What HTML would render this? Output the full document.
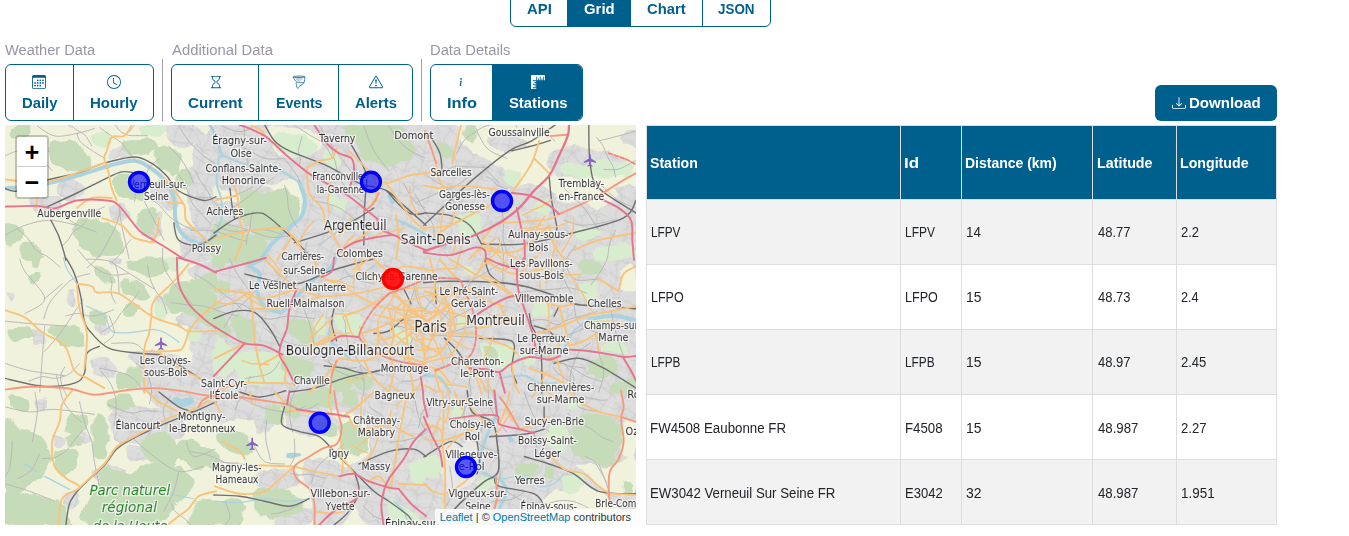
<!DOCTYPE html>
<html lang="en">
<head>
<meta charset="utf-8">
<title>Weather Stations</title>
<style>
*{box-sizing:border-box}
html,body{margin:0;padding:0;background:#fff}
body{width:1349px;height:536px;overflow:hidden;position:relative;font-family:"Liberation Sans","DejaVu Sans",sans-serif;color:#212529}
.abs{position:absolute}
.grp{position:absolute;border:1px solid #00608d;border-radius:6px;background:#fff;overflow:hidden}
.grp i{position:absolute;top:0;bottom:0;width:1px;background:#00608d}
.grp b{position:absolute;top:0;bottom:0;background:#00608d}
.sep{position:absolute;width:1px;background:#a59fb3}
.tx{position:absolute;white-space:nowrap;font-size:14px;line-height:20px;height:20px;transform-origin:0 50%}
.ic{position:absolute;width:14px;height:14px;fill:#00608d}
#dl{left:1155px;top:85px;width:122px;height:36px;background:#00608d;border-radius:6px}
#map{left:5px;top:125px;width:631px;height:400px;background:#e8e6df;overflow:hidden}
#tbl{left:646px;top:125px;width:631px;height:400px;background:#ddd}
#tbl div{position:absolute}
#tbl .h{background:#00608d;top:1px;height:73px}
#tbl .r{left:1px;right:1px;height:64px}
#tbl .v{top:0;bottom:0;width:1px;background:#ddd}
#tbl .hl{left:0;right:0;height:1px;background:#ddd}
#zc{position:absolute;left:10px;top:10px;width:34px;height:64px;border:2px solid rgba(0,0,0,0.2);border-radius:4px;background-clip:padding-box}
#zc .zb{position:relative;width:30px;height:30px;background:#fff;text-align:center;font:bold 25px/30px "Liberation Mono","DejaVu Sans Mono",monospace;color:#000}
#zc .zb span{position:absolute;left:0;right:0;top:3px}
#zc .zb:first-child{border-radius:2px 2px 0 0}
#zc .zb:last-child{border-radius:0 0 2px 2px}
#attr{position:absolute;right:0;bottom:0;height:16px;padding:0 5px;background:rgba(255,255,255,0.8);font:11px/16px "Liberation Sans","DejaVu Sans",sans-serif;color:#333;white-space:nowrap}
#attr .lk{color:#0078a8}
</style>
</head>
<body>
<div class="grp" style="left:510px;top:-12px;width:261px;height:39px"><b style="left:56px;width:64px"></b><i style="left:56px"></i><i style="left:119px"></i><i style="left:191px"></i></div>
<div class="sep" style="left:162px;top:59px;height:62px"></div>
<div class="sep" style="left:421px;top:59px;height:62px"></div>
<div class="grp" style="left:5px;top:64px;width:149px;height:57px"><i style="left:67px"></i></div>
<div class="grp" style="left:171px;top:64px;width:242px;height:57px"><i style="left:86px"></i><i style="left:166px"></i></div>
<div class="grp" style="left:430px;top:64px;width:153px;height:57px"><b style="left:61px;right:0"></b></div>
<div class="abs" id="dl"></div>
<svg class="ic" style="left:32.3px;top:75.0px;fill:#00608d;width:14px;height:14px" viewBox="0 0 16 16"><path d="M14 0H2a2 2 0 0 0-2 2v12a2 2 0 0 0 2 2h12a2 2 0 0 0 2-2V2a2 2 0 0 0-2-2M1 3.857C1 3.384 1.448 3 2 3h12c.552 0 1 .384 1 .857v10.286c0 .473-.448.857-1 .857H2c-.552 0-1-.384-1-.857z"/><path d="M6.500 7a1 1 0 1 0 0-2 1 1 0 0 0 0 2m3 0a1 1 0 1 0 0-2 1 1 0 0 0 0 2m3 0a1 1 0 1 0 0-2 1 1 0 0 0 0 2m-9 3a1 1 0 1 0 0-2 1 1 0 0 0 0 2m3 0a1 1 0 1 0 0-2 1 1 0 0 0 0 2m3 0a1 1 0 1 0 0-2 1 1 0 0 0 0 2m3 0a1 1 0 1 0 0-2 1 1 0 0 0 0 2m-9 3a1 1 0 1 0 0-2 1 1 0 0 0 0 2m3 0a1 1 0 1 0 0-2 1 1 0 0 0 0 2m3 0a1 1 0 1 0 0-2 1 1 0 0 0 0 2"/></svg>
<svg class="ic" style="left:106.6px;top:75.0px;fill:#00608d;width:14px;height:14px" viewBox="0 0 16 16"><path d="M8 3.500a.5.5 0 0 0-1 0V9a.5.5 0 0 0 .252.434l3.500 2a.5.5 0 0 0 .496-.868L8 8.710z"/><path d="M8 16A8 8 0 1 0 8 0a8 8 0 0 0 0 16m7-8A7 7 0 1 1 1 8a7 7 0 0 1 14 0"/></svg>
<svg class="ic" style="left:208.5px;top:75.0px;fill:#00608d;width:14px;height:14px" viewBox="0 0 16 16"><path d="M2 1.500a.5.5 0 0 1 .5-.5h11a.5.5 0 0 1 0 1h-1v1a4.500 4.500 0 0 1-2.557 4.060c-.29.139-.443.377-.443.590v.7c0 .213.154.451.443.590A4.500 4.500 0 0 1 12.500 13v1h1a.5.5 0 0 1 0 1h-11a.5.5 0 1 1 0-1h1v-1a4.500 4.500 0 0 1 2.557-4.060c.29-.139.443-.377.443-.590v-.7c0-.213-.154-.451-.443-.590A4.500 4.500 0 0 1 3.500 3V2h-1a.5.5 0 0 1-.5-.5m2.500.5v1a3.500 3.500 0 0 0 1.989 3.158c.533.256 1.011.791 1.011 1.491v.702c0 .7-.478 1.235-1.011 1.491A3.500 3.500 0 0 0 4.500 13v1h7v-1a3.500 3.500 0 0 0-1.989-3.158C8.978 9.586 8.500 9.052 8.500 8.351v-.702c0-.7.478-1.235 1.011-1.491A3.500 3.500 0 0 0 11.500 3V2z"/></svg>
<svg class="ic" style="left:291.7px;top:75.0px;fill:#00608d;width:14px;height:14px" viewBox="0 0 16 16"><path fill="#c9d3da" stroke="none" d="M3 3h10L9 8 6 7z"/><path fill="none" stroke="#00608d" stroke-width="0.85" stroke-linejoin="round" d="M1.2 2C1.2 1 14.8 1 14.8 2S1.2 3.3 1.2 2zM1.2 2.2C2.2 4.8 3.8 6.6 5.3 7.8 4.6 9 4.6 10.2 5.1 11.3 4.9 13 5.6 14.4 6.8 15.4 7.2 13.8 8.6 12.6 10.2 11.8 12 10.8 13.3 9.7 13.9 8.2 14.4 6 14.7 4 14.8 2.2M6 8.2C8.5 8.9 11 9 13.5 8.4"/></svg>
<svg class="ic" style="left:368.5px;top:75.0px;fill:#00608d;width:14px;height:14px" viewBox="0 0 16 16"><path d="M7.938 2.016A.13.13 0 0 1 8.002 2a.13.13 0 0 1 .063.016.15.15 0 0 1 .054.057l6.857 11.667c.036.060.035.124.002.183a.2.2 0 0 1-.054.060.1.1 0 0 1-.066.017H1.146a.1.1 0 0 1-.066-.017.2.2 0 0 1-.054-.060.18.18 0 0 1 .002-.183L7.884 2.073a.15.15 0 0 1 .054-.057m1.044-.450a1.130 1.130 0 0 0-1.960 0L.165 13.233c-.457.778.091 1.767.980 1.767h13.713c.889 0 1.438-.990.980-1.767z"/><path d="M7.002 12a1 1 0 1 1 2 0 1 1 0 0 1-2 0M7.100 5.995a.905.905 0 1 1 1.800 0l-.350 3.507a.552.552 0 0 1-1.100 0z"/></svg>
<svg class="ic" style="left:454.3px;top:75.0px;fill:#00608d;width:14px;height:14px" viewBox="0 0 16 16"><path d="m8.930 6.588-2.290.287-.082.380.450.083c.294.070.352.176.288.469l-.738 3.468c-.194.897.105 1.319.808 1.319.545 0 1.178-.252 1.465-.598l.088-.416c-.2.176-.492.246-.686.246-.275 0-.375-.193-.304-.533zM9 4.500a1 1 0 1 1-2 0 1 1 0 0 1 2 0"/></svg>
<svg class="ic" style="left:531.0px;top:75.0px;fill:#fff;width:14px;height:14px" viewBox="0 0 16 16"><path d="M1 0a1 1 0 0 0-1 1v14a1 1 0 0 0 1 1h5v-1H2v-1h4v-1H4v-1h2v-1H2v-1h4V9H4V8h2V7H2V6h4V2h1v4h1V4h1v2h1V2h1v4h1V4h1v2h1V2h1v4h1V1a1 1 0 0 0-1-1z"/></svg>
<svg class="ic" style="left:1171.5px;top:96.0px;fill:#fff;width:14px;height:14px" viewBox="0 0 16 16"><path d="M.5 9.900a.5.5 0 0 1 .5.5v2.500a1 1 0 0 0 1 1h12a1 1 0 0 0 1-1v-2.500a.5.5 0 0 1 1 0v2.500a2 2 0 0 1-2 2H2a2 2 0 0 1-2-2v-2.500a.5.5 0 0 1 .5-.5"/><path d="M7.646 11.854a.5.5 0 0 0 .708 0l3-3a.5.5 0 0 0-.708-.708L8.500 10.293V1.500a.5.5 0 0 0-1 0v8.793L5.354 8.146a.5.5 0 1 0-.708.708z"/></svg>
<div class="abs" id="tbl">
<div class="h" style="left:1px;right:1px"></div>
<div class="r" style="top:75px;background:#f2f2f2"></div>
<div class="r" style="top:140px;background:#fff"></div>
<div class="r" style="top:205px;background:#f2f2f2"></div>
<div class="r" style="top:270px;background:#fff"></div>
<div class="r" style="top:335px;background:#f2f2f2"></div>
<div class="v" style="left:254px"></div><div class="v" style="left:315px"></div><div class="v" style="left:446px"></div><div class="v" style="left:530px"></div>
</div>
<span class="tx" style="left:527.4px;top:-1px;font-weight:700;color:#00608d;transform:scaleX(1.0608)">API</span>
<span class="tx" style="left:584.4px;top:-1px;font-weight:700;color:#fff;transform:scaleX(1.0651)">Grid</span>
<span class="tx" style="left:647.1px;top:-1px;font-weight:700;color:#00608d;transform:scaleX(1.0572)">Chart</span>
<span class="tx" style="left:717.9px;top:-1px;font-weight:700;color:#00608d;transform:scaleX(0.9583)">JSON</span>
<span class="tx" style="left:5.4px;top:40px;font-weight:400;color:#9a94a6;transform:scaleX(1.0480)">Weather Data</span>
<span class="tx" style="left:171.6px;top:40px;font-weight:400;color:#9a94a6;transform:scaleX(1.0628)">Additional Data</span>
<span class="tx" style="left:430.1px;top:40px;font-weight:400;color:#9a94a6;transform:scaleX(1.0538)">Data Details</span>
<span class="tx" style="left:21.5px;top:93px;font-weight:700;color:#00608d;transform:scaleX(1.0588)">Daily</span>
<span class="tx" style="left:89.9px;top:93px;font-weight:700;color:#00608d;transform:scaleX(1.0737)">Hourly</span>
<span class="tx" style="left:188.2px;top:93px;font-weight:700;color:#00608d;transform:scaleX(1.0792)">Current</span>
<span class="tx" style="left:275.5px;top:93px;font-weight:700;color:#00608d;transform:scaleX(1.0129)">Events</span>
<span class="tx" style="left:354.8px;top:93px;font-weight:700;color:#00608d;transform:scaleX(1.0580)">Alerts</span>
<span class="tx" style="left:446.8px;top:93px;font-weight:700;color:#00608d;transform:scaleX(1.1755)">Info</span>
<span class="tx" style="left:509.0px;top:93px;font-weight:700;color:#fff;transform:scaleX(1.0575)">Stations</span>
<span class="tx" style="left:1189.4px;top:93px;font-weight:700;color:#fff;transform:scaleX(1.0731)">Download</span>
<span class="tx" style="left:650.0px;top:153px;font-weight:700;color:#fff;transform:scaleX(1.0089)">Station</span>
<span class="tx" style="left:904.1px;top:153px;font-weight:700;color:#fff;transform:scaleX(1.2102)">Id</span>
<span class="tx" style="left:965.4px;top:153px;font-weight:700;color:#fff;transform:scaleX(0.9985)">Distance (km)</span>
<span class="tx" style="left:1096.5px;top:153px;font-weight:700;color:#fff;transform:scaleX(1.0200)">Latitude</span>
<span class="tx" style="left:1180.1px;top:153px;font-weight:700;color:#fff;transform:scaleX(1.0130)">Longitude</span>
<span class="tx" style="left:650.6px;top:222px;font-weight:400;color:#212529;transform:scaleX(0.8400)">LFPV</span>
<span class="tx" style="left:650.5px;top:287px;font-weight:400;color:#212529;transform:scaleX(0.8933)">LFPO</span>
<span class="tx" style="left:650.6px;top:352px;font-weight:400;color:#212529;transform:scaleX(0.8418)">LFPB</span>
<span class="tx" style="left:650.4px;top:418px;font-weight:400;color:#212529;transform:scaleX(0.9501)">FW4508 Eaubonne FR</span>
<span class="tx" style="left:650.4px;top:483px;font-weight:400;color:#212529;transform:scaleX(0.9452)">EW3042 Verneuil Sur Seine FR</span>
<span class="tx" style="left:904.9px;top:222px;font-weight:400;color:#212529;transform:scaleX(0.8549)">LFPV</span>
<span class="tx" style="left:904.9px;top:287px;font-weight:400;color:#212529;transform:scaleX(0.8990)">LFPO</span>
<span class="tx" style="left:904.9px;top:352px;font-weight:400;color:#212529;transform:scaleX(0.8478)">LFPB</span>
<span class="tx" style="left:904.7px;top:418px;font-weight:400;color:#212529;transform:scaleX(0.9447)">F4508</span>
<span class="tx" style="left:904.7px;top:483px;font-weight:400;color:#212529;transform:scaleX(0.9302)">E3042</span>
<span class="tx" style="left:966.0px;top:222px;font-weight:400;color:#212529;transform:scaleX(0.9594)">14</span>
<span class="tx" style="left:965.9px;top:287px;font-weight:400;color:#212529;transform:scaleX(0.9887)">15</span>
<span class="tx" style="left:965.9px;top:352px;font-weight:400;color:#212529;transform:scaleX(0.9887)">15</span>
<span class="tx" style="left:965.9px;top:418px;font-weight:400;color:#212529;transform:scaleX(0.9887)">15</span>
<span class="tx" style="left:966.4px;top:483px;font-weight:400;color:#212529;transform:scaleX(0.9988)">32</span>
<span class="tx" style="left:1097.8px;top:222px;font-weight:400;color:#212529;transform:scaleX(0.9283)">48.77</span>
<span class="tx" style="left:1097.8px;top:287px;font-weight:400;color:#212529;transform:scaleX(0.9275)">48.73</span>
<span class="tx" style="left:1097.8px;top:352px;font-weight:400;color:#212529;transform:scaleX(0.9283)">48.97</span>
<span class="tx" style="left:1097.8px;top:418px;font-weight:400;color:#212529;transform:scaleX(0.9429)">48.987</span>
<span class="tx" style="left:1097.8px;top:483px;font-weight:400;color:#212529;transform:scaleX(0.9429)">48.987</span>
<span class="tx" style="left:1181.1px;top:222px;font-weight:400;color:#212529;transform:scaleX(0.9269)">2.2</span>
<span class="tx" style="left:1181.2px;top:287px;font-weight:400;color:#212529;transform:scaleX(0.9061)">2.4</span>
<span class="tx" style="left:1181.1px;top:352px;font-weight:400;color:#212529;transform:scaleX(0.9309)">2.45</span>
<span class="tx" style="left:1181.1px;top:418px;font-weight:400;color:#212529;transform:scaleX(0.9333)">2.27</span>
<span class="tx" style="left:1180.7px;top:483px;font-weight:400;color:#212529;transform:scaleX(0.9589)">1.951</span>
<div class="abs" id="map"><svg id="mapsvg" width="631" height="400" viewBox="5 125 631 400" style="position:absolute;left:0;top:0">
<defs><pattern id="ug" width="46" height="38" patternUnits="userSpaceOnUse" patternTransform="rotate(17)"><rect width="46" height="38" fill="#dddcdc"/><path fill="none" stroke="#c9c8c8" stroke-width="0.8" d="M0 6H46M0 19H46M0 30H46M8 0V38M23 0V38M37 0V38M0 0L46 38M46 12L20 38"/><path fill="none" stroke="#e8e8e8" stroke-width="0.6" d="M0 12H46M15 0V38"/></pattern><filter id="halo" x="-2%" y="-2%" width="104%" height="104%"><feMorphology in="SourceAlpha" operator="dilate" radius="1.1" result="d"/><feGaussianBlur in="d" stdDeviation="0.45" result="b"/><feFlood flood-color="#fff" flood-opacity="0.78"/><feComposite in2="b" operator="in" result="h"/><feMerge><feMergeNode in="h"/><feMergeNode in="SourceGraphic"/></feMerge></filter><filter id="rough" x="-5%" y="-5%" width="110%" height="110%"><feTurbulence type="fractalNoise" baseFrequency="0.045" numOctaves="3" seed="7"/><feDisplacementMap in="SourceGraphic" scale="14" xChannelSelector="R" yChannelSelector="G"/></filter></defs>
<rect x="5" y="125" width="631" height="400" fill="#f1f2dc"/>
<g filter="url(#rough)">
<path fill="url(#ug)" d="M57.1 181.9C60 178.7 72 178.3 77 179.4C82 180.4 86.9 184.7 86.9 188.1C86.9 191.4 81.5 197.6 77 199.2C72.4 200.9 62.9 200.9 59.6 198C56.3 195.1 54.2 185 57.1 181.9ZM153.9 183.1C157.7 181.2 169.7 181.9 173.8 184.3C177.9 186.8 178.8 193.6 178.8 198C178.8 202.3 177.1 208.7 173.8 210.4C170.5 212.1 162.6 210.4 158.9 207.9C155.2 205.4 152.3 199.6 151.5 195.5C150.6 191.4 150.2 185 153.9 183.1ZM109.3 149.6C112.2 147.9 125.4 148.1 129.1 149.6C132.8 151 134.5 156.6 131.6 158.3C128.7 159.9 115.5 161 111.7 159.5C108 158.1 106.4 151.2 109.3 149.6ZM196.1 168.2C200.5 165.7 211.9 155.4 215 165.7C218.1 176.1 217.3 220.3 215 230.3C212.7 240.2 204.7 230.3 201.1 225.3C197.5 220.3 195.7 207.9 193.7 200.5C191.6 193 188.3 186 188.7 180.6C189.1 175.2 191.7 170.7 196.1 168.2ZM139 220.3C142.1 217.4 154.8 213.7 158.9 215.4C163 217 165.5 226.5 163.9 230.3C162.2 234 152.9 237.3 149 237.7C145 238.1 141.9 235.6 140.3 232.7C138.6 229.8 135.9 223.2 139 220.3ZM109.3 207.9C110.9 205.4 120.8 203.8 124.1 205.4C127.5 207.1 130.8 215.4 129.1 217.8C127.5 220.3 117.5 222 114.2 220.3C110.9 218.7 107.6 210.4 109.3 207.9ZM29.8 198C34 195.9 49.7 193.8 54.6 195.5C59.6 197.2 61.7 205 59.6 207.9C57.5 210.8 47.2 212.9 42.2 212.9C37.3 212.9 31.9 210.4 29.8 207.9C27.8 205.4 25.7 200.1 29.8 198ZM178.8 230.3C183.1 225.9 209 227.9 215 232.7C221 237.5 219.4 254.7 215 259C210.6 263.4 194.7 263.8 188.7 259C182.6 254.3 174.4 234.6 178.8 230.3ZM163.9 126C168.8 123.9 192.4 123.5 198.6 126C204.8 128.5 203.6 137.2 201.1 140.9C198.6 144.6 189.1 148.8 183.7 148.3C178.3 147.9 172.1 142.1 168.8 138.4C165.5 134.7 158.9 128.1 163.9 126ZM213.8 124.8C249.1 102.2 390.6 102.2 426 124.8C461.4 147.3 461.4 237.5 426 260C390.6 282.6 249.1 282.6 213.8 260C178.4 237.5 178.4 147.3 213.8 124.8ZM425 126C430.4 103.8 451.1 123.5 457.3 126C463.5 128.5 458.1 135.9 462.2 140.9C466.4 145.9 475.1 150.8 482.1 155.8C489.1 160.8 499.1 166.1 504.4 170.7C509.8 175.2 507.7 180.2 514.4 183.1C521 186 535.9 185.2 544.1 188.1C552.4 191 554.9 198.4 564 200.5C573.1 202.5 586.8 203 598.8 200.5C610.8 198 629.8 175.8 636 185.6C642.2 195.3 671.2 246.8 636 259C600.8 271.3 460.2 281.2 425 259C389.8 236.9 419.6 148.2 425 126ZM494.5 131C499.1 129.7 514.4 133 519.3 135.9C524.3 138.8 526.4 145.4 524.3 148.3C522.2 151.2 512.3 154.1 506.9 153.3C501.5 152.5 494.1 147.1 492 143.4C490 139.7 490 132.2 494.5 131ZM554.1 150.8C559 147.9 569 147.9 578.9 148.3C588.8 148.8 606.2 150.8 613.7 153.3C621.1 155.8 626.1 159.5 623.6 163.2C621.1 167 608.7 173.2 598.8 175.6C588.8 178.1 572.3 179.8 564 178.1C555.7 176.5 550.8 170.3 549.1 165.7C547.5 161.2 549.1 153.7 554.1 150.8ZM621.1 135.9C623.2 133.9 633.5 131.8 636 133.4C638.5 135.1 638.1 143.8 636 145.9C633.9 147.9 626.1 147.5 623.6 145.9C621.1 144.2 619 138 621.1 135.9ZM96.8 321.1C98.5 318.6 107.2 319 109.3 321.1C111.3 323.1 110.9 331 109.3 333.5C107.6 336 101.4 338 99.3 336C97.3 333.9 95.2 323.5 96.8 321.1ZM153.9 296.2C156.4 295 166.8 296.6 168.8 298.7C170.9 300.8 168.8 307.4 166.3 308.6C163.9 309.9 156 308.2 153.9 306.2C151.9 304.1 151.5 297.5 153.9 296.2ZM178.8 316.1C182.1 314.9 196.1 316.5 198.6 318.6C201.1 320.6 197 327.3 193.7 328.5C190.3 329.7 181.2 328.1 178.8 326C176.3 324 175.4 317.3 178.8 316.1ZM129.1 353.3C134.5 350.4 153.1 349.2 163.9 350.8C174.6 352.5 185.1 360.4 193.7 363.3C202.2 366.2 211.4 363.4 215 368.2C218.6 373 226.8 388.1 215 392C203.2 396 157.9 396 144 392C130.1 388.1 134.1 374.7 131.6 368.2C129.1 361.8 123.7 356.2 129.1 353.3ZM89.4 360.8C91.9 357.5 105.1 355.8 109.3 358.3C113.4 360.8 116.7 372.4 114.2 375.7C111.7 379 98.5 380.6 94.4 378.1C90.2 375.7 86.9 364.1 89.4 360.8ZM69.5 291.3C70.6 289.2 75.5 289.2 77 291.3C78.4 293.3 79.3 301.6 78.2 303.7C77.2 305.7 72.2 305.7 70.8 303.7C69.3 301.6 68.5 293.3 69.5 291.3ZM29.8 328.5C31.5 326 40.2 328.1 42.2 331C44.3 333.9 43.9 343.4 42.2 345.9C40.6 348.4 34.4 348.8 32.3 345.9C30.2 343 28.2 331 29.8 328.5ZM188.7 266.4C191.4 263.6 210.6 261.1 215 264C219.4 266.9 217.7 280.9 215 283.8C212.3 286.7 203 284.2 198.6 281.3C194.2 278.4 186 269.3 188.7 266.4ZM5 293.8C6.2 292.7 11.6 294.6 12.4 296.2C13.3 297.9 11.2 302.6 10 303.7C8.7 304.7 5.8 304.1 5 302.4C4.2 300.8 3.8 294.8 5 293.8ZM109.3 259C110.9 257.8 119.6 257.8 121.7 259C123.7 260.2 123.3 265.2 121.7 266.4C120 267.7 113.8 267.7 111.7 266.4C109.7 265.2 107.6 260.2 109.3 259ZM215 259C250 236.8 390 236.8 425 259C460 281.2 460 369.9 425 392C390 414.2 250 414.2 215 392C180 369.9 180 281.2 215 259ZM425 259C460.2 236.8 600.8 236.8 636 259C671.2 281.2 671.2 369.9 636 392C600.8 414.2 460.2 414.2 425 392C389.8 369.9 389.8 281.2 425 259ZM114.2 408.1C120 405 135.3 405 144 405.7C152.7 406.3 163 407.5 166.3 411.9C169.7 416.2 167.6 426.8 163.9 431.7C160.1 436.7 151.9 440 144 441.6C136.1 443.3 122.5 444.5 116.7 441.6C110.9 438.7 109.7 429.9 109.3 424.3C108.8 418.7 108.4 411.2 114.2 408.1ZM96.8 466.5C100.6 464 117.5 464 121.7 466.5C125.8 469 125.4 478.9 121.7 481.4C117.9 483.8 103.5 483.8 99.3 481.4C95.2 478.9 93.1 469 96.8 466.5ZM151.5 392C160.8 389.5 204.4 388.3 215 392C225.6 395.7 220.2 410.2 215 414.3C209.8 418.5 193.1 418.1 183.7 416.8C174.4 415.6 164.3 411 158.9 406.9C153.5 402.8 142.1 394.5 151.5 392ZM129.1 446.6C132 444.5 145.2 445.8 149 447.9C152.7 449.9 154.3 457 151.5 459C148.6 461.1 135.3 462.3 131.6 460.3C127.9 458.2 126.2 448.7 129.1 446.6ZM74.5 434.2C76.2 432.1 84.4 430.5 86.9 431.7C89.4 433 91.1 439.6 89.4 441.6C87.7 443.7 79.5 445.4 77 444.1C74.5 442.9 72.8 436.3 74.5 434.2ZM34.8 399.4C36.2 397.8 43.1 397.8 44.7 399.4C46.4 401.1 46.2 407.7 44.7 409.4C43.3 411 37.7 411 36 409.4C34.4 407.7 33.3 401.1 34.8 399.4ZM62.1 493.8C64.2 490.9 74.1 489.2 77 491.3C79.9 493.4 81.5 503.3 79.5 506.2C77.4 509.1 67.5 510.7 64.6 508.7C61.7 506.6 60 496.7 62.1 493.8ZM54.6 434.2C56.1 432.8 62.9 433.8 64.6 435.4C66.2 437.1 66 442.7 64.6 444.1C63.1 445.6 57.5 445.8 55.9 444.1C54.2 442.5 53.2 435.6 54.6 434.2ZM153.9 411.9C158.1 408.5 173.8 410.6 178.8 414.3C183.7 418.1 185.8 429.6 183.7 434.2C181.7 438.7 171.3 441.6 166.3 441.6C161.4 441.6 156 439.2 153.9 434.2C151.9 429.2 149.8 415.2 153.9 411.9ZM354 392C365.8 387.9 413.2 369.8 425 392C436.8 414.2 433.5 502.9 425 525C416.5 547.2 385.7 528.2 373.9 525C362 521.9 359 512.6 354 506.2C349 499.7 344.9 492.9 344.1 486.3C343.3 479.7 345.7 471.8 349 466.5C352.4 461.1 360.6 460.3 363.9 454.1C367.2 447.9 370.6 435.4 368.9 429.2C367.2 423 356.5 423 354 416.8C351.5 410.6 342.2 396.1 354 392ZM215 392C228.7 387 284.5 389.5 296.9 392C309.3 394.5 294.8 403.2 289.5 406.9C284.1 410.6 272.9 412.3 264.6 414.3C256.4 416.4 248.1 418.1 239.8 419.3C231.5 420.5 219.1 426.3 215 421.8C210.9 417.2 201.3 397 215 392ZM284.5 411.9C288.4 409 301.1 406.9 309.3 406.9C317.6 406.9 329.2 408.5 334.1 411.9C339.1 415.2 340.8 422.6 339.1 426.8C337.5 430.9 330.4 435.4 324.2 436.7C318 437.9 308.3 436.3 301.9 434.2C295.5 432.1 288.6 428 285.7 424.3C282.8 420.5 280.6 414.8 284.5 411.9ZM304.4 461.5C309.7 458.2 326.7 458.2 334.1 459C341.6 459.8 347.4 461.9 349 466.5C350.7 471 349 482.2 344.1 486.3C339.1 490.5 326.3 492.5 319.3 491.3C312.2 490 304.4 483.8 301.9 478.9C299.4 473.9 299 464.8 304.4 461.5ZM259.7 471.4C264.6 468.1 283.3 467.3 289.5 469C295.7 470.6 298.6 477.6 296.9 481.4C295.3 485.1 285.7 490 279.5 491.3C273.3 492.5 263 492.1 259.7 488.8C256.4 485.5 254.7 474.7 259.7 471.4ZM314.3 486.3C318.4 479.5 332.5 480.5 339.1 483.8C345.7 487.2 354 499.3 354 506.2C354 513.1 345.7 521.9 339.1 525C332.5 528.2 318.4 531.5 314.3 525C310.2 518.6 310.2 493.2 314.3 486.3ZM254.7 414.3C256.8 411.4 266.7 413.9 269.6 416.8C272.5 419.7 274.2 428.8 272.1 431.7C270 434.6 260.1 437.1 257.2 434.2C254.3 431.3 252.6 417.2 254.7 414.3ZM277.1 511.1C282.4 508.4 303.9 506.3 309.3 508.7C314.7 511 314.7 522.3 309.3 525C303.9 527.8 282.4 527.4 277.1 525C271.7 522.7 271.7 513.9 277.1 511.1ZM423.8 390.8C459.3 368.2 601.7 368.2 637.2 390.8C672.8 413.3 672.8 503.5 637.2 526C601.7 548.6 459.3 548.6 423.8 526C388.2 503.5 388.2 413.3 423.8 390.8Z"/>
<path fill="#e6d9e3" d="M274.6 185.6C276.6 182.7 285.3 181 289.5 183.1C293.6 185.2 299.4 193.8 299.4 198C299.4 202.1 293.2 207.5 289.5 207.9C285.7 208.3 279.5 204.2 277.1 200.5C274.6 196.7 272.5 188.5 274.6 185.6ZM497 416.8C498.6 413.9 508.6 418.5 511.9 421.8C515.2 425.1 518.5 433.8 516.8 436.7C515.2 439.6 505.3 442.5 502 439.2C498.6 435.9 495.3 419.7 497 416.8Z"/>
<path fill="#f1f2dc" d="M268.4 131C272.5 127.7 288.4 127.7 296.9 128.5C305.4 129.3 316.4 132.2 319.3 135.9C322.2 139.7 319.3 147.5 314.3 150.8C309.3 154.1 296.5 156.2 289.5 155.8C282.4 155.4 275.6 152.5 272.1 148.3C268.6 144.2 264.2 134.3 268.4 131ZM264.6 183.1C268.4 182.1 290.7 179 296.9 181.9C303.1 184.7 301.9 194.5 301.9 200.5C301.9 206.5 299 216.6 296.9 217.8C294.8 219.1 293.2 212.9 289.5 207.9C285.7 203 278.7 192.2 274.6 188.1C270.4 183.9 260.9 184.1 264.6 183.1ZM215 188.1C217.5 186.2 226.2 187.2 229.9 189.3C233.6 191.4 238.2 198.2 237.3 200.5C236.5 202.7 228.7 203 224.9 203C221.2 203 216.7 203 215 200.5C213.3 198 212.5 189.9 215 188.1ZM583.9 200.5C585.5 197.6 602.9 191 608.7 190.5C614.5 190.1 620.3 195.1 618.6 198C617 200.9 604.6 207.5 598.8 207.9C593 208.3 582.2 203.4 583.9 200.5ZM215 343.4C217.1 340.9 224.9 343.4 227.4 345.9C229.9 348.4 232 355.8 229.9 358.3C227.8 360.8 217.5 363.3 215 360.8C212.5 358.3 212.9 345.9 215 343.4ZM621.1 268.9C624 266.4 633.5 262.7 636 266.4C638.5 270.2 638.1 287.1 636 291.3C633.9 295.4 626.5 292.9 623.6 291.3C620.7 289.6 619 285.1 618.6 281.3C618.2 277.6 618.2 271.4 621.1 268.9ZM576.4 464C578.9 462.7 591.3 466.9 598.8 466.5C606.2 466.1 614.9 464 621.1 461.5C627.3 459 633.5 446.6 636 451.6C638.5 456.5 640.3 484.3 636 491.3C631.6 498.3 616.1 494.6 609.9 493.8C603.7 492.9 603.1 489.6 598.8 486.3C594.4 483 587.6 477.6 583.9 473.9C580.1 470.2 573.9 465.2 576.4 464ZM549.1 493.8C554.1 487.4 565.7 488 573.9 487.6C582.2 487.2 592.1 487.8 598.8 491.3C605.4 494.8 607.4 505.4 613.7 508.7C619.9 512 632.3 508.3 636 511.1C639.7 514 651.3 523.6 636 526C620.7 528.5 558.6 531.4 544.1 526C529.7 520.7 544.1 500.2 549.1 493.8ZM623.6 419.3C625.7 414.8 633.9 416.4 636 421.8C638.1 427.2 638.1 447 636 451.6C633.9 456.1 625.7 454.5 623.6 449.1C621.5 443.7 621.5 423.9 623.6 419.3Z"/>
<path fill="#e9e7e4" d="M444.9 446.6C449.8 439.8 469.1 440.8 474.6 445.4C480.2 449.9 480.4 466.7 478.4 473.9C476.3 481.2 467.8 486.7 462.2 488.8C456.6 490.9 447.8 493.4 444.9 486.3C442 479.3 439.9 453.4 444.9 446.6Z"/>
<path fill="#d8edcd" d="M94.4 131C97.3 129.3 107.6 131 109.3 133.4C110.9 135.9 107.2 144.2 104.3 145.9C101.4 147.5 93.5 145.9 91.9 143.4C90.2 140.9 91.5 132.6 94.4 131ZM139 126C142.4 124.3 160.6 124.3 163.9 126C167.2 127.7 162.2 134.3 158.9 135.9C155.6 137.6 147.3 137.6 144 135.9C140.7 134.3 135.7 127.7 139 126ZM272.1 138.4C275.8 135.9 289.9 132.6 296.9 133.4C303.9 134.3 312.2 139.7 314.3 143.4C316.4 147.1 313.5 153.9 309.3 155.8C305.2 157.6 295.3 155.8 289.5 154.5C283.7 153.3 277.5 151 274.6 148.3C271.7 145.7 268.4 140.9 272.1 138.4ZM324.2 150.8C326.3 149.2 336.6 152.9 339.1 155.8C341.6 158.7 341.2 166.5 339.1 168.2C337 169.9 329.2 168.6 326.7 165.7C324.2 162.8 322.2 152.5 324.2 150.8ZM331.7 195.5C334.1 194.3 344.5 195.9 346.6 198C348.6 200.1 346.6 206.7 344.1 207.9C341.6 209.2 333.7 207.5 331.7 205.4C329.6 203.4 329.2 196.7 331.7 195.5ZM564 163.2C569.4 160.8 588 160.8 598.8 160.8C609.5 160.8 623.2 161.2 628.5 163.2C633.9 165.3 636 170.7 631 173.2C626.1 175.6 609.5 177.7 598.8 178.1C588 178.5 572.3 178.1 566.5 175.6C560.7 173.2 558.6 165.7 564 163.2ZM506.9 170.7C509 169 517.7 170.7 519.3 173.2C521 175.6 518.9 183.9 516.8 185.6C514.8 187.2 508.6 185.6 506.9 183.1C505.3 180.6 504.8 172.3 506.9 170.7ZM457.3 217.8C459.3 214.9 470.9 213.3 474.6 215.4C478.4 217.4 481.7 227.4 479.6 230.3C477.5 233.2 466 234.8 462.2 232.7C458.5 230.7 455.2 220.7 457.3 217.8ZM571.5 230.3C573.1 227.8 584.3 224.5 588.8 225.3C593.4 226.1 600.4 232.7 598.8 235.2C597.1 237.7 583.5 241 578.9 240.2C574.3 239.4 569.8 232.7 571.5 230.3ZM598.8 247.6C602.9 244.9 617.4 242.3 623.6 242.7C629.8 243.1 633.9 247.4 636 250.1C638.1 252.8 642.2 257.6 636 259C629.8 260.5 605 261 598.8 259C592.6 257.1 594.6 250.4 598.8 247.6ZM534.2 203C536.7 201.7 547 203.4 549.1 205.4C551.2 207.5 549.1 214.1 546.6 215.4C544.1 216.6 536.3 214.9 534.2 212.9C532.2 210.8 531.7 204.2 534.2 203ZM153.9 303.7C156 302.2 166.8 304.1 168.8 306.2C170.9 308.2 168.4 314.6 166.3 316.1C164.3 317.5 158.5 316.9 156.4 314.9C154.3 312.8 151.9 305.1 153.9 303.7ZM188.7 331C190.8 329.5 199.4 330.2 201.1 332.2C202.8 334.3 200.7 341.9 198.6 343.4C196.5 344.8 190.3 343 188.7 340.9C187 338.8 186.6 332.4 188.7 331ZM163.9 259C165.9 257.3 176.3 257.3 178.8 259C181.2 260.7 180.8 267.3 178.8 268.9C176.7 270.6 168.8 270.6 166.3 268.9C163.9 267.3 161.8 260.7 163.9 259ZM234.9 353.3C239.4 350.4 251.8 350 259.7 350.8C267.5 351.7 277.5 354.2 282 358.3C286.6 362.4 288.2 371.1 287 375.7C285.7 380.2 281.6 384.4 274.6 385.6C267.5 386.8 251.8 386 244.8 383.1C237.8 380.2 234 373.2 232.4 368.2C230.7 363.3 230.3 356.2 234.9 353.3ZM339.1 316.1C341.6 312.8 352.4 312 356.5 313.6C360.6 315.3 363.9 322.3 363.9 326C363.9 329.7 360.2 334.7 356.5 336C352.8 337.2 344.5 336.8 341.6 333.5C338.7 330.2 336.6 319.4 339.1 316.1ZM215 340.9C217.5 336.4 226.6 342.2 229.9 345.9C233.2 349.6 235.7 358.3 234.9 363.3C234 368.2 228.2 374 224.9 375.7C221.6 377.3 216.7 379 215 373.2C213.3 367.4 212.5 345.5 215 340.9ZM314.3 321.1C315.9 319.4 324.6 319.4 326.7 321.1C328.8 322.7 328.4 329.3 326.7 331C325 332.6 318.8 332.6 316.8 331C314.7 329.3 312.6 322.7 314.3 321.1ZM393.7 328.5C396.2 327.3 406.5 328.9 408.6 331C410.7 333.1 408.6 339.7 406.1 340.9C403.7 342.2 395.8 340.5 393.7 338.4C391.7 336.4 391.2 329.7 393.7 328.5ZM482.1 343.4C486.4 340.3 504 339.7 509.4 342.2C514.8 344.6 516 354.4 514.4 358.3C512.7 362.2 504.6 365.3 499.5 365.7C494.3 366.2 486.2 364.5 483.3 360.8C480.4 357 477.7 346.5 482.1 343.4ZM603.7 344.6C606.8 343.2 620.3 343.2 623.6 344.6C626.9 346.1 626.7 351.9 623.6 353.3C620.5 354.8 608.3 354.8 605 353.3C601.7 351.9 600.6 346.1 603.7 344.6ZM462.2 266.4C464.3 265.2 473 266.9 474.6 268.9C476.3 271 474.2 277.6 472.2 278.9C470.1 280.1 463.9 278.4 462.2 276.4C460.6 274.3 460.2 267.7 462.2 266.4ZM534.2 303.7C536.7 302 546.6 303.7 549.1 306.2C551.6 308.6 551.6 316.9 549.1 318.6C546.6 320.2 536.7 318.6 534.2 316.1C531.7 313.6 531.7 305.3 534.2 303.7ZM578.9 286.3C580.6 283.8 590.5 282.2 593.8 283.8C597.1 285.5 600.4 293.8 598.8 296.2C597.1 298.7 587.2 300.4 583.9 298.7C580.6 297.1 577.2 288.8 578.9 286.3ZM583.9 318.6C586.8 316.5 600 314.9 603.7 316.1C607.4 317.3 609.1 324 606.2 326C603.3 328.1 590.1 329.7 586.3 328.5C582.6 327.3 581 320.6 583.9 318.6ZM519.3 353.3C521.8 352.1 532.2 353.7 534.2 355.8C536.3 357.9 534.2 364.5 531.7 365.7C529.3 367 521.4 365.3 519.3 363.3C517.3 361.2 516.8 354.6 519.3 353.3ZM457.3 316.1C458.9 314.9 465.8 315.7 467.2 317.3C468.6 319 467.6 324.8 466 326C464.3 327.3 458.7 326.4 457.3 324.8C455.8 323.1 455.6 317.3 457.3 316.1ZM104.3 491.3C106.4 488.8 117.5 485.5 121.7 486.3C125.8 487.2 131.2 493.8 129.1 496.3C127 498.7 113.4 502 109.3 501.2C105.1 500.4 102.2 493.8 104.3 491.3ZM388.8 501.2C391.2 498.5 402.6 504.7 408.6 508.7C414.7 512.6 427.5 522.3 425 525C422.5 527.8 399.8 529 393.7 525C387.7 521.1 386.3 504 388.8 501.2ZM408.6 466.5C410.9 463.2 422.3 459 425 461.5C427.7 464 427.3 478.1 425 481.4C422.7 484.7 413.8 483.8 411.1 481.4C408.4 478.9 406.3 469.8 408.6 466.5ZM544.1 426.8C546.6 423.4 560.3 425.5 564 429.2C567.7 433 569 445.8 566.5 449.1C564 452.4 552.8 452.8 549.1 449.1C545.4 445.4 541.7 430.1 544.1 426.8ZM425 454.1C427.5 451.2 437.4 453.2 439.9 456.5C442.4 459.8 442.4 471 439.9 473.9C437.4 476.8 427.5 477.2 425 473.9C422.5 470.6 422.5 457 425 454.1ZM479.6 478.9C481.7 476.8 491.6 475.2 494.5 476.4C497.4 477.6 499.1 484.3 497 486.3C494.9 488.4 485 490 482.1 488.8C479.2 487.6 477.5 480.9 479.6 478.9ZM454.8 404.4C456.9 402.8 463.5 404.4 464.7 406.9C466 409.4 464.3 417.7 462.2 419.3C460.2 421 453.5 419.3 452.3 416.8C451.1 414.3 452.7 406.1 454.8 404.4ZM564 401.9C565.7 399.9 575.6 398.2 578.9 399.4C582.2 400.7 585.5 407.3 583.9 409.4C582.2 411.4 572.3 413.1 569 411.9C565.7 410.6 562.4 404 564 401.9ZM564 473.9C567.3 472.3 581.4 473.5 583.9 476.4C586.3 479.3 582.2 489.6 578.9 491.3C575.6 492.9 566.5 489.2 564 486.3C561.5 483.4 560.7 475.6 564 473.9Z"/>
<path fill="#c6dcb8" d="M50.9 144.6C52.2 140.9 57.3 140.3 62.1 140.9C66.8 141.5 74.9 145.4 79.5 148.3C84 151.2 88.2 154.8 89.4 158.3C90.6 161.8 90.2 167.4 86.9 169.4C83.6 171.5 74.9 171.7 69.5 170.7C64.2 169.6 57.7 167.6 54.6 163.2C51.5 158.9 49.7 148.3 50.9 144.6ZM156.4 148.3C158.9 146.1 165.1 143.8 168.8 144.6C172.6 145.4 176.9 149.4 178.8 153.3C180.6 157.2 181.2 164.5 180 168.2C178.8 171.9 174.4 175.6 171.3 175.6C168.2 175.6 164.3 171.1 161.4 168.2C158.5 165.3 154.8 161.6 153.9 158.3C153.1 155 153.9 150.6 156.4 148.3ZM114.2 176.9C116.3 174.2 124.1 172.5 129.1 174.4C134.1 176.3 141.7 184.1 144 188.1C146.3 192 145.2 196.1 142.8 198C140.3 199.8 133.5 200.5 129.1 199.2C124.8 198 119.2 194.3 116.7 190.5C114.2 186.8 112.2 179.6 114.2 176.9ZM74.5 224C77.6 221.2 87.7 219.7 94.4 220.3C101 220.9 109.3 224.5 114.2 227.8C119.2 231.1 122.9 236 124.1 240.2C125.4 244.3 125 250.1 121.7 252.6C118.4 255.1 110.1 255.5 104.3 255.1C98.5 254.7 91.7 253 86.9 250.1C82.2 247.2 77.8 242 75.7 237.7C73.7 233.4 71.4 226.9 74.5 224ZM5 225.3C7.1 222.8 14.5 225.7 17.4 227.8C20.3 229.8 22.8 234.8 22.4 237.7C22 240.6 17.8 244.3 14.9 245.1C12 246 6.7 246 5 242.7C3.3 239.4 2.9 227.8 5 225.3ZM22.4 242.7C24.9 240.3 34 242.4 37.3 245.1C40.6 247.9 44.7 256.7 42.2 259C39.8 261.4 25.7 261.8 22.4 259C19.1 256.3 19.9 245 22.4 242.7ZM139 209.2C140.7 205.4 148.6 206.1 151.5 207.9C154.3 209.8 156.4 216.2 156.4 220.3C156.4 224.5 153.9 231.1 151.5 232.7C149 234.4 143.6 234.2 141.5 230.3C139.5 226.3 137.4 212.9 139 209.2ZM10 126C12.4 124.6 24.9 124.3 27.3 126C29.8 127.7 27.3 134.5 24.9 135.9C22.4 137.4 14.9 136.3 12.4 134.7C10 133 7.5 127.4 10 126ZM124.1 140.9C127.5 138.4 138.2 137.6 144 138.4C149.8 139.2 158.9 143.4 158.9 145.9C158.9 148.3 149.8 152.1 144 153.3C138.2 154.5 127.5 155.4 124.1 153.3C120.8 151.2 120.8 143.4 124.1 140.9ZM176.3 173.2C178.1 170.7 185.8 169 188.7 170.7C191.6 172.3 194.5 179.8 193.7 183.1C192.8 186.4 186.4 190.1 183.7 190.5C181 191 178.8 188.5 177.5 185.6C176.3 182.7 174.4 175.6 176.3 173.2ZM239.8 193C244.2 189.9 256.4 189.3 264.6 189.3C272.9 189.3 283.9 190.3 289.5 193C295.1 195.7 297.3 200.5 298.2 205.4C299 210.4 297.5 217.8 294.4 222.8C291.3 227.8 285.3 232.7 279.5 235.2C273.7 237.7 265.5 239.4 259.7 237.7C253.9 236 248.3 230.3 244.8 225.3C241.3 220.3 239.4 213.3 238.6 207.9C237.8 202.5 235.5 196.1 239.8 193ZM215 225.3C217.9 218.8 227.8 218.7 232.4 220.3C236.9 222 236.9 232.3 242.3 235.2C247.7 238.1 261.3 233.7 264.6 237.7C268 241.7 270.4 255.5 262.2 259C253.9 262.6 222.9 264.7 215 259C207.1 253.4 212.1 231.7 215 225.3ZM350.3 124.8C356.9 120.8 383.6 122.5 393.7 124.8C403.9 127 407.8 133.2 411.1 138.4C414.4 143.6 416.5 151.7 413.6 155.8C410.7 159.9 401.2 162.4 393.7 163.2C386.3 164.1 375.5 163.2 368.9 160.8C362.3 158.3 357.1 154.3 354 148.3C350.9 142.3 343.7 128.7 350.3 124.8ZM439.9 140.9C442.4 140.1 449.8 140.9 452.3 143.4C454.8 145.9 456.4 153.3 454.8 155.8C453.1 158.3 445.3 159.5 442.4 158.3C439.5 157 437.8 151.2 437.4 148.3C437 145.4 437.4 141.7 439.9 140.9ZM464.7 128.5C466 126.6 472.6 126.8 474.6 128.5C476.7 130.1 478.4 136.5 477.1 138.4C475.9 140.3 469.3 141.3 467.2 139.7C465.1 138 463.5 130.3 464.7 128.5ZM52.2 327.3C56.5 325.2 74.3 323.3 79.5 326C84.6 328.7 85.3 339.9 83.2 343.4C81.1 346.9 72 347.9 67.1 347.1C62.1 346.3 55.9 341.7 53.4 338.4C50.9 335.1 47.8 329.3 52.2 327.3ZM89.4 312.4C91.9 310.2 103.5 309.5 106.8 311.1C110.1 312.8 111.7 320.1 109.3 322.3C106.8 324.4 95.2 325.7 91.9 324C88.6 322.4 86.9 314.5 89.4 312.4ZM129.1 259C134.5 256.9 157.7 256.9 163.9 259C170.1 261.1 168.8 268.3 166.3 271.4C163.9 274.5 154.8 277.6 149 277.6C143.2 277.6 134.9 274.5 131.6 271.4C128.3 268.3 123.7 261.1 129.1 259ZM94.4 264C96.6 262.7 105.9 263.6 109.3 266.4C112.6 269.3 115 278.4 114.2 281.3C113.4 284.2 107.4 285.1 104.3 283.8C101.2 282.6 97.3 277.2 95.6 273.9C93.9 270.6 92.1 265.2 94.4 264ZM120.4 280.1C122.1 278.4 129.7 278.7 134.1 281.3C138.4 284 145.7 292.7 146.5 296.2C147.3 299.8 142.8 303.3 139 302.4C135.3 301.6 127.3 295 124.1 291.3C121 287.5 118.8 281.8 120.4 280.1ZM163.9 291.3C165.9 287.5 172.1 281.8 178.8 281.3C185.4 280.9 197.5 285.9 203.6 288.8C209.6 291.7 213.1 292.9 215 298.7C216.9 304.5 217.7 319.8 215 323.5C212.3 327.3 204.7 322.7 198.6 321.1C192.6 319.4 184.1 316.5 178.8 313.6C173.4 310.7 168.8 307.4 166.3 303.7C163.9 300 161.8 295 163.9 291.3ZM116.7 371.9C119.2 368.8 132.6 368.4 136.6 370.7C140.5 373 142.8 382.5 140.3 385.6C137.8 388.7 125.6 391.6 121.7 389.3C117.7 387 114.2 375 116.7 371.9ZM7.5 327.3C10 324.8 23.6 324.2 27.3 326C31.1 327.9 32.3 336 29.8 338.4C27.3 340.9 16.2 342.8 12.4 340.9C8.7 339.1 5 329.7 7.5 327.3ZM188.7 278.9C192.2 276.8 210.6 274.3 215 276.4C219.4 278.4 218.6 289.2 215 291.3C211.4 293.3 198 290.9 193.7 288.8C189.3 286.7 185.1 280.9 188.7 278.9ZM124.1 304.9C126 303.5 134.9 304.3 136.6 306.2C138.2 308 135.9 314.6 134.1 316.1C132.2 317.5 127 316.7 125.4 314.9C123.7 313 122.3 306.4 124.1 304.9ZM29.8 259C31.5 258 38.5 258.6 39.8 260.2C41 261.9 38.9 267.9 37.3 268.9C35.6 270 31.1 268.1 29.8 266.4C28.6 264.8 28.2 260 29.8 259ZM32.3 273.9C33.5 272.7 38.5 272.7 39.8 273.9C41 275.1 41 280.1 39.8 281.3C38.5 282.6 33.5 282.6 32.3 281.3C31.1 280.1 31.1 275.1 32.3 273.9ZM215 312.4C217.1 309.3 224.5 311.7 227.4 314.9C230.3 318 233.2 327.5 232.4 331C231.5 334.5 225.3 335.5 222.4 336C219.6 336.4 216.2 337.4 215 333.5C213.8 329.5 212.9 315.5 215 312.4ZM289.5 323.5C291.5 320.2 302.3 319.8 306.8 321.1C311.4 322.3 315.9 327.5 316.8 331C317.6 334.5 315.5 340.5 311.8 342.2C308.1 343.8 298.2 344 294.4 340.9C290.7 337.8 287.4 326.8 289.5 323.5ZM234.9 316.1C236.9 312.8 249.3 315.3 252.2 318.6C255.1 321.9 254.3 332.6 252.2 336C250.2 339.3 242.7 341.7 239.8 338.4C236.9 335.1 232.8 319.4 234.9 316.1ZM331.7 370.7C334.6 366.7 347.4 366.2 351.5 368.2C355.7 370.3 356.9 379.1 356.5 383.1C356.1 387.1 352.8 390.6 349 392C345.3 393.5 337 395.6 334.1 392C331.3 388.5 328.8 374.7 331.7 370.7ZM284.5 358.3C287.4 355.8 296.9 354.2 301.9 355.8C306.8 357.5 315.1 364.5 314.3 368.2C313.5 371.9 301.9 377.7 296.9 378.1C292 378.6 286.6 374 284.5 370.7C282.4 367.4 281.6 360.8 284.5 358.3ZM354 378.1C355.2 375.4 365.6 374 368.9 375.7C372.2 377.3 375.1 385.3 373.9 388.1C372.6 390.8 364.8 393.7 361.5 392C358.1 390.4 352.8 380.9 354 378.1ZM215 283.8C217.1 281.3 224.9 279.7 227.4 281.3C229.9 283 232 291.3 229.9 293.8C227.8 296.2 217.5 297.9 215 296.2C212.5 294.6 212.9 286.3 215 283.8ZM215 259C216.7 257.3 223.7 257.3 224.9 259C226.2 260.7 224.1 267.3 222.4 268.9C220.8 270.6 216.2 270.6 215 268.9C213.8 267.3 213.3 260.7 215 259ZM484.6 345.9C486.2 343.6 494.5 342.6 497 344.6C499.5 346.7 501.1 356 499.5 358.3C497.8 360.6 489.5 360.4 487.1 358.3C484.6 356.2 482.9 348.2 484.6 345.9ZM578.9 261.5C581.8 259.4 595 258.6 598.8 260.2C602.5 261.9 604.1 269.3 601.2 271.4C598.3 273.5 585.1 274.3 581.4 272.7C577.7 271 576 263.6 578.9 261.5ZM588.8 360.8C591.7 357.5 609.1 356.2 613.7 358.3C618.2 360.4 619 369.9 616.1 373.2C613.2 376.5 600.8 380.2 596.3 378.1C591.7 376.1 585.9 364.1 588.8 360.8ZM608.7 383.1C612.4 380.8 631.4 376.7 636 378.1C640.5 379.6 639.7 389.7 636 392C632.3 394.4 618.2 393.5 613.7 392C609.1 390.6 605 385.4 608.7 383.1ZM5 424.3C7.5 413.9 14.5 425.1 19.9 426.8C25.3 428.4 32.3 430.5 37.3 434.2C42.2 437.9 48 442.9 49.7 449.1C51.3 455.3 49.7 465.2 47.2 471.4C44.7 477.6 39.3 483 34.8 486.3C30.2 489.6 24.9 490.9 19.9 491.3C14.9 491.7 7.5 500 5 488.8C2.5 477.6 2.5 434.6 5 424.3ZM5 491.3C8.3 486.1 17.8 492.5 24.9 493.8C31.9 495 40.6 496.3 47.2 498.7C53.8 501.2 61.3 504.3 64.6 508.7C67.9 513.1 77 522.3 67.1 525C57.1 527.8 15.3 530.7 5 525C-5.3 519.4 1.7 496.5 5 491.3ZM67.1 415.6C69.1 412.3 80.9 412.1 84.4 414.3C87.9 416.6 90.2 425.9 88.2 429.2C86.1 432.5 75.5 436.5 72 434.2C68.5 431.9 65 418.9 67.1 415.6ZM93.1 414.3C94.8 407.5 102 408.5 104.3 413.1C106.6 417.7 106.8 434 106.8 441.6C106.8 449.3 106.4 457 104.3 459C102.2 461.1 96.2 461.5 94.4 454.1C92.5 446.6 91.5 421.2 93.1 414.3ZM104.3 466.5C109.3 465.2 120.8 474.3 129.1 473.9C137.4 473.5 145.7 465.2 153.9 464C162.2 462.7 172.1 463.6 178.8 466.5C185.4 469.4 193.7 475.6 193.7 481.4C193.7 487.2 185.4 493.9 178.8 501.2C172.1 508.5 169.2 521.1 153.9 525C138.6 529 97.7 529.4 86.9 525C76.2 520.7 87.3 506 89.4 498.7C91.5 491.5 96.8 486.7 99.3 481.4C101.8 476 99.3 467.7 104.3 466.5ZM139 439.2C141.5 435 157.2 435 163.9 436.7C170.5 438.3 177.1 444.5 178.8 449.1C180.4 453.6 178.8 461.9 173.8 464C168.8 466.1 154.8 465.6 149 461.5C143.2 457.4 136.6 443.3 139 439.2ZM54.6 449.1C57.5 446.6 68.7 448.7 72 451.6C75.3 454.5 75.7 462.3 74.5 466.5C73.3 470.6 67.9 476.4 64.6 476.4C61.3 476.4 56.3 471 54.6 466.5C53 461.9 51.7 451.6 54.6 449.1ZM10 397C12.9 395.1 24.9 395.7 27.3 398.2C29.8 400.7 27.8 410 24.9 411.9C22 413.7 12.4 411.9 10 409.4C7.5 406.9 7.1 398.8 10 397ZM178.8 441.6C182.1 439.6 192.6 441.6 198.6 444.1C204.7 446.6 212.3 452 215 456.5C217.7 461.1 218.6 469.8 215 471.4C211.4 473.1 199.7 469 193.7 466.5C187.6 464 181.2 460.7 178.8 456.5C176.3 452.4 175.4 443.7 178.8 441.6ZM109.3 399.4C111.7 397.4 125 395.7 129.1 397C133.3 398.2 136.6 404.8 134.1 406.9C131.6 409 118.4 410.6 114.2 409.4C110.1 408.1 106.8 401.5 109.3 399.4ZM67.1 436.7C68.7 434.6 77.4 433.8 79.5 435.4C81.5 437.1 81.1 444.5 79.5 446.6C77.8 448.7 71.6 449.5 69.5 447.9C67.5 446.2 65.4 438.7 67.1 436.7ZM193.7 506.2C198 502.2 211.4 498.1 215 501.2C218.6 504.4 219.4 521.1 215 525C210.6 529 192.2 528.2 188.7 525C185.1 521.9 189.3 510.2 193.7 506.2ZM296.9 392C301.9 389.9 323.4 389.9 329.2 392C335 394.1 334.1 401.5 331.7 404.4C329.2 407.3 319.7 409.4 314.3 409.4C308.9 409.4 302.3 407.3 299.4 404.4C296.5 401.5 292 394.1 296.9 392ZM339.1 424.3C342.6 421.8 354.4 419.7 359 421.8C363.5 423.9 366 431.7 366.4 436.7C366.8 441.6 365.2 449.5 361.5 451.6C357.7 453.6 348 451.6 344.1 449.1C340.1 446.6 338.7 440.8 337.9 436.7C337 432.5 335.6 426.8 339.1 424.3ZM220 429.2C223.3 427.2 234.4 429.6 239.8 431.7C245.2 433.8 250.6 437.5 252.2 441.6C253.9 445.8 253.5 454.5 249.8 456.5C246 458.6 234.9 456.1 229.9 454.1C224.9 452 221.6 448.3 220 444.1C218.3 440 216.7 431.3 220 429.2ZM252.2 491.3C256 488 268.8 488 277.1 488.8C285.3 489.6 298.2 492.1 301.9 496.3C305.6 500.4 303.9 510.3 299.4 513.6C294.8 516.9 282 516.9 274.6 516.1C267.1 515.3 258.4 512.8 254.7 508.7C251 504.5 248.5 494.6 252.2 491.3ZM282 401.9C284.5 399.4 296.1 399.4 299.4 401.9C302.7 404.4 304.4 414.3 301.9 416.8C299.4 419.3 287.8 419.3 284.5 416.8C281.2 414.3 279.5 404.4 282 401.9ZM264.6 406.9C267.1 404.4 277.1 406.5 279.5 409.4C282 412.3 282 421.8 279.5 424.3C277.1 426.8 267.1 427.2 264.6 424.3C262.2 421.4 262.2 409.4 264.6 406.9ZM215 501.2C219.1 497.2 235.3 497.2 239.8 501.2C244.4 505.2 246.4 521.1 242.3 525C238.2 529 219.6 529 215 525C210.4 521.1 210.9 505.2 215 501.2ZM319.3 421.8C321.7 420.1 332.1 421.8 334.1 424.3C336.2 426.8 334.1 435 331.7 436.7C329.2 438.3 321.3 436.7 319.3 434.2C317.2 431.7 316.8 423.4 319.3 421.8ZM344.1 392C346.6 390.3 356.9 390.3 359 392C361 393.7 359 400.3 356.5 401.9C354 403.6 346.1 403.6 344.1 401.9C342 400.3 341.6 393.7 344.1 392ZM571.5 421.8C576.4 417.7 590.9 416.8 598.8 416.8C606.6 416.8 614.9 417.7 618.6 421.8C622.3 425.9 621.5 435 621.1 441.6C620.7 448.3 619.9 457.8 616.1 461.5C612.4 465.2 604.6 464.8 598.8 464C593 463.2 586.3 460.3 581.4 456.5C576.4 452.8 570.6 447.4 569 441.6C567.3 435.9 566.5 425.9 571.5 421.8ZM519.3 464C521.6 461.7 531.5 461.9 534.2 464C536.9 466.1 537.7 474.1 535.5 476.4C533.2 478.7 523.3 479.7 520.6 477.6C517.9 475.6 517.1 466.3 519.3 464ZM544.1 466.5C546 464.8 553.7 465.6 555.3 467.7C557 469.8 555.9 477.2 554.1 478.9C552.2 480.5 545.8 479.7 544.1 477.6C542.5 475.6 542.3 468.1 544.1 466.5ZM623.6 483.8C624.9 482.4 630.3 482.7 631.5 484.3C632.8 486 632.4 492.3 631 493.8C629.7 495.3 624.8 494.9 623.6 493.3C622.3 491.6 622.3 485.3 623.6 483.8Z"/>
<path fill="#aad3df" d="M173.8 397C176.3 395.9 189.9 398 193.7 399.4C197.4 400.9 198.6 404.6 196.1 405.7C193.7 406.7 182.5 407.1 178.8 405.7C175 404.2 171.3 398 173.8 397ZM287 450.8C288.6 449.7 296.1 449.5 298.2 450.3C300.2 451.2 301.1 454.9 299.4 456C297.7 457.2 290.3 457.9 288.2 457C286.2 456.2 285.3 451.9 287 450.8ZM509.4 436.2C510.3 435.4 514 435.8 514.9 436.7C515.7 437.6 515.3 440.9 514.4 441.6C513.5 442.4 510.2 442.1 509.4 441.1C508.6 440.2 508.5 436.9 509.4 436.2Z"/>
</g>
<path fill="none" stroke="#aad3df" stroke-width="4" stroke-linecap="round" stroke-linejoin="round" d="M3.8 188.6C7.3 188.3 17.6 187.6 24.9 186.8C32.1 186 38.1 185.5 47.2 183.6C56.3 181.6 69.1 178.1 79.5 175.1C89.8 172.2 100.2 168.1 109.3 165.7C118.4 163.3 127.5 160.5 134.1 160.8C140.7 161 144 163.9 149 167C153.9 170.1 159.7 174.4 163.9 179.4C168 184.3 171.8 189.9 173.8 196.7C175.8 203.6 174.1 213.9 175.8 220.3C177.4 226.7 179.5 231.3 183.7 235.2C187.9 239.2 195.7 243.9 201.1 243.9C206.5 243.9 213.5 236.7 216 235.2M299.4 181.9C300.3 185 304.4 194.9 304.9 200.5C305.3 206.1 304.4 210.8 301.9 215.4C299.3 219.9 294.6 222.8 289.5 227.8C284.3 232.7 275.6 239.8 270.9 245.1C266.1 250.5 262.6 257.6 260.9 260M260.9 260.2C259.5 260.9 254.1 262.9 252.2 264C250.4 265 248.5 264.8 249.8 266.4C251 268.1 258.4 269.8 259.7 273.9C260.9 278 256.4 285.9 257.2 291.3C258 296.6 260.5 302.8 264.6 306.2C268.8 309.6 277.1 312.9 282 311.6C287 310.4 289.1 304.2 294.4 298.7C299.8 293.3 308.1 284.2 314.3 278.9C320.5 273.5 328.2 270 331.7 266.4C335.2 262.9 334.8 259.2 335.4 257.8M588.8 319.1C593 318.6 605.8 315.9 613.7 316.1C621.5 316.3 632.3 319.4 636 320.1"/>
<path fill="none" stroke="#aad3df" stroke-width="2" stroke-linecap="round" stroke-linejoin="round" d="M216 235C217 231.7 221.2 221.2 222 215C222.8 208.8 221.8 203 221 198C220.2 193 217.5 190.5 217 185C216.5 179.5 217.2 169.8 218 165C218.8 160.2 217.5 156.2 222 156C226.5 155.8 236.2 162 245 164C253.8 166 266 165 275 168C284 171 295 179.7 299 182M534.2 353.3C537.5 354.2 549.1 359.6 554.1 358.8C559 358 560.7 353 564 348.4C567.3 343.7 569.8 335.9 573.9 331C578.1 326.1 586.3 321.1 588.8 319.1M499.5 378.1C503.6 377.7 517.7 374.8 524.3 375.7C530.9 376.5 533.8 381.9 539.2 383.1C544.6 384.4 553.7 383.1 556.6 383.1"/>
<path fill="none" stroke="#aad3df" stroke-width="3" stroke-linecap="round" stroke-linejoin="round" d="M222 156C221.2 153.3 219 145.3 217 140C215 134.7 211.2 126.7 210 124M396.2 219.8C398.7 220.9 406.1 224 411.1 226.5C416.1 229.1 423.5 233.8 426 235.2M423.8 235.2C425.6 236 431.4 238.1 434.9 240.2C438.4 242.3 443.2 246.4 444.9 247.6M331.7 322.3C331.3 325 327.9 333.9 329.2 338.4C330.4 343 335.8 346.3 339.1 349.6C342.4 352.9 347.4 356.8 349 358.3M425 375.7C427.5 376.1 435.8 375.4 439.9 378.1C444 380.9 448.2 389.7 449.8 392M493.3 390.8C493.9 394.3 497.2 406.3 497 411.9C496.8 417.4 494.1 419.3 492 424.3C490 429.2 486.6 434.6 484.6 441.6C482.5 448.7 478.8 460.7 479.6 466.5C480.4 472.3 486.2 474.2 489.5 476.4C492.8 478.5 496.6 476.9 499.5 479.4C502.4 481.9 506.9 486.4 506.9 491.3C506.9 496.2 501.5 502.9 499.5 508.7C497.4 514.5 495.3 523.1 494.5 526"/>
<path fill="none" stroke="#aad3df" stroke-width="5" stroke-linecap="round" stroke-linejoin="round" d="M390 196.7 L392.5 201.7"/>
<path fill="none" stroke="#aad3df" stroke-width="1.2" stroke-linecap="round" stroke-linejoin="round" d="M86.9 306.2C89.8 307.8 100.2 312 104.3 316.1C108.4 320.2 107.6 328.2 111.7 331C115.9 333.8 122.1 332.9 129.1 332.7C136.1 332.5 147.7 329.6 153.9 329.7C160.1 329.9 162.2 331.4 166.3 333.5C170.5 335.5 176.7 340.7 178.8 342.2M63.3 257.8C64 259.6 64.8 264.6 67.1 268.9C69.3 273.3 75.3 281.3 77 283.8M215 501.2C219.1 501.4 231.5 502.9 239.8 502.5C248.1 502 256.4 498.9 264.6 498.7C272.9 498.5 282 501.2 289.5 501.2C296.9 501.2 306 499.2 309.3 498.7M499.5 479.4C503.6 478.9 517.7 475.2 524.3 476.4C530.9 477.6 534.2 485.1 539.2 486.3C544.1 487.6 549.9 485.9 554.1 483.8C558.2 481.8 562.4 475.6 564 473.9"/>
<path fill="none" stroke="#aad3df" stroke-width="1.5" stroke-linecap="round" stroke-linejoin="round" d="M24.9 464 L37.3 471.9M44.7 476.4 L69.5 489.3M393.7 501.2C395.4 502.9 401.2 507.2 403.7 511.1C406.1 515.1 407.8 522.7 408.6 525"/>
<path fill="none" stroke="#aad3df" stroke-width="1" stroke-linecap="round" stroke-linejoin="round" d="M168.8 493.8 L193.7 498.7"/>
<path fill="none" stroke="#bab9ba" stroke-width="1" stroke-linecap="round" stroke-linejoin="round" d="M37.3 126C40.2 127.7 48 134.7 54.6 135.9C61.3 137.2 70.4 134.7 77 133.4C83.6 132.2 91.5 129.3 94.4 128.5M77 133.4C77.8 135.1 77.4 139.2 82 143.4C86.5 147.5 100.6 155.8 104.3 158.3M168.8 145.9C171.3 148.8 179.6 157 183.7 163.2C187.9 169.4 192 179.8 193.7 183.1M5 235.2C8.3 233.6 17.4 227.8 24.9 225.3C32.3 222.8 41 220.3 49.7 220.3C58.4 220.3 72.4 224.5 77 225.3M119.2 207.9C119.6 210.8 120 216.8 121.7 225.3C123.3 233.8 127.9 253.4 129.1 259M144 200.5C145.7 203.8 150.6 213.7 153.9 220.3C157.2 226.9 162.2 236.9 163.9 240.2M178.8 126C180.4 128.5 184.6 135.9 188.7 140.9C192.8 145.9 199.2 152.1 203.6 155.8C208 159.5 213.1 162 215 163.2M5 155.8C7.5 155 14.5 150.8 19.9 150.8C25.3 150.8 31.9 152.5 37.3 155.8C42.6 159.1 49.7 168.2 52.2 170.7M215 140.9C219.1 141.7 231.5 143 239.8 145.9C248.1 148.8 257.2 156.2 264.6 158.3C272.1 160.3 281.2 158.3 284.5 158.3M319.3 126C321.7 129.7 328.4 140.1 334.1 148.3C339.9 156.6 350.7 171.1 354 175.6M363.9 126C365.6 130.1 369.7 143.4 373.9 150.8C378 158.3 386.3 167.4 388.8 170.7M388.8 126C391.2 129.3 397.6 140.5 403.7 145.9C409.7 151.2 421.4 156.2 425 158.3M314.3 200.5C318.4 201.7 330.8 203.8 339.1 207.9C347.4 212.1 355.7 221.6 363.9 225.3C372.2 229 384.6 229.4 388.8 230.3M319.3 245.1C322.6 242.7 333.3 234.4 339.1 230.3C344.9 226.1 351.5 222 354 220.3M403.7 183.1C405.3 186 410 196.3 413.6 200.5C417.1 204.6 423.1 206.7 425 207.9M284.5 158.3C286.6 161.2 294.4 171.7 296.9 175.6C299.4 179.6 299 180.8 299.4 181.9M474.6 126C476.7 129.7 481.7 143 487.1 148.3C492.4 153.7 503.6 156.6 506.9 158.3M482.1 165.7 L499.5 183.1M598.8 140.9C602.1 140.1 612.4 137.6 618.6 135.9C624.8 134.3 633.1 131.8 636 131M564 188.1C567.3 191.4 578.1 200.9 583.9 207.9C589.7 214.9 596.3 226.5 598.8 230.3M598.8 183.1C602.1 186 612.4 196.3 618.6 200.5C624.8 204.6 633.1 206.7 636 207.9M449.8 188.1C452.3 191.4 460.6 203.8 464.7 207.9C468.9 212.1 473 212.1 474.6 212.9M564 220.3C567.3 221.2 575.6 225.3 583.9 225.3C592.1 225.3 608.7 221.2 613.7 220.3M19.9 259C20.7 261.1 20.7 264.8 24.9 271.4C29 278 44.7 291.7 44.7 298.7C44.7 305.7 28.2 311.1 24.9 313.6M44.7 298.7 L62.1 283.8M5 321.1C9.1 321.5 19.5 322.7 29.8 323.5C40.2 324.4 60.9 325.6 67.1 326M44.7 326C44.3 331.4 43.1 347.3 42.2 358.3C41.4 369.3 40.2 386.4 39.8 392M86.9 259C91.5 259.8 108.8 258.2 114.2 264C119.6 269.8 118.4 288.8 119.2 293.8M114.2 264 L153.9 288.8M5 363.3C9.1 364.5 19.9 368.6 29.8 370.7C39.8 372.8 58.8 374.8 64.6 375.7M109.3 316.1C110.1 319 115 328.9 114.2 333.5C113.4 338 105.9 341.7 104.3 343.4M99.3 368.2C104.3 369.5 121.7 371.7 129.1 375.7C136.6 379.6 141.5 389.3 144 392M111.7 343.4C115.5 343.4 128.7 342.1 134.1 343.4C139.5 344.7 142.4 350 144 351.3M215 308.6C219.1 307.8 231.5 302 239.8 303.7C248.1 305.3 256.4 316.5 264.6 318.6C272.9 320.6 281.2 316.1 289.5 316.1C297.7 316.1 310.2 318.2 314.3 318.6M301.9 303.7C303.1 307 307.3 316.5 309.3 323.5C311.4 330.6 313.5 342.2 314.3 345.9M264.6 328.5C268.8 331 281.2 340.5 289.5 343.4C297.7 346.3 310.2 345.5 314.3 345.9M229.9 259C231.1 261.5 234 268.5 237.3 273.9C240.7 279.3 247.7 288.4 249.8 291.3M344.1 268.9C345.7 270.6 349 276.4 354 278.9C359 281.3 370.6 283 373.9 283.8M413.6 283.8C414.4 287.1 416.5 299.5 418.5 303.7C420.6 307.8 424.8 307.8 426 308.6M354 353.3C355.7 355.8 359 364.5 363.9 368.2C368.9 371.9 380.5 374.4 383.8 375.7M564 259C565.7 262.3 568.1 275.5 573.9 278.9C579.7 282.2 594.6 278.9 598.8 278.9M573.9 303.7C574.8 307 574.8 318.6 578.9 323.5C583 328.5 595.4 331.8 598.8 333.5M598.8 353.3C599.6 356.6 603.7 366.7 603.7 373.2C603.7 379.6 599.6 388.9 598.8 392M564 363.3C565.7 365.7 573.1 373.3 573.9 378.1C574.8 382.9 569.8 389.7 569 392M611.2 311.1C612 314.9 614.1 325.8 616.1 333.5C618.2 341.1 622.3 353.1 623.6 357M5 406.9C9.1 407.7 21.5 411.4 29.8 411.9C38.1 412.3 43.9 409 54.6 409.4C65.4 409.8 87.7 413.5 94.4 414.3M34.8 392C35.2 395.3 37.7 403.6 37.3 411.9C36.9 420.1 33.1 436.7 32.3 441.6M12.4 441.6C12 445.8 11.2 460.7 10 466.5C8.7 472.3 5.8 474.7 5 476.4M5 483.8C9.1 485.1 21.5 488.4 29.8 491.3C38.1 494.2 50.5 499.6 54.6 501.2M91.9 441.6C92.3 445 93.1 454.1 94.4 461.5C95.6 469 98.5 482.2 99.3 486.3M134.1 439.2C137.4 442.1 146.5 451.2 153.9 456.5C161.4 461.9 170.5 469.8 178.8 471.4C187 473.1 199.4 467.3 203.6 466.5M178.8 471.4C177.9 474.7 176.3 484.7 173.8 491.3C171.3 497.9 165.5 507.8 163.9 511.1M186.2 441.6C187.4 444.1 188.9 455.3 193.7 456.5C198.5 457.8 211.4 450.3 215 449.1M79.5 401.9C80.3 405.2 82.4 415.2 84.4 421.8C86.5 428.4 90.6 438.3 91.9 441.6M215 461.5C219.1 461.9 232.8 463.4 239.8 464C246.9 464.6 254.3 465 257.2 465.2M254.7 446.6C256.4 449.1 259.7 458.6 264.6 461.5C269.6 464.4 281.2 463.6 284.5 464M294.4 439.2C294.4 442.1 295.3 452 294.4 456.5C293.6 461.1 290.3 464.8 289.5 466.5M368.9 406.9C371.4 408.5 378.8 413.1 383.8 416.8C388.8 420.5 396.2 427.2 398.7 429.2M413.6 392C414.4 396.1 416.6 410.6 418.5 416.8C420.4 423 423.9 427.2 425 429.2M224.9 501.2C225.8 503.7 229.9 512.1 229.9 516.1C229.9 520.1 225.8 523.6 224.9 525M363.9 506.2C365.6 507.8 369.7 513.6 373.9 516.1C378 518.6 386.3 520.3 388.8 521.1M524.3 392C525.9 396.1 530.1 410.2 534.2 416.8C538.4 423.4 546.6 429.2 549.1 431.7M534.2 433C535 436.9 536.7 451.4 539.2 456.5C541.7 461.7 547.5 462.7 549.1 464M573.9 392C574.8 394.5 574.8 403.6 578.9 406.9C583 410.2 595.4 411 598.8 411.9M449.8 466.5C450.2 470.6 453.1 484.3 452.3 491.3C451.5 498.3 446.1 505.8 444.9 508.7M506.9 491.3C509.8 492.9 517.3 499.2 524.3 501.2C531.3 503.3 545 503.3 549.1 503.7M598.8 464C599.6 466.1 601.9 471.4 603.7 476.4C605.6 481.4 608.9 490.9 609.9 493.8M423.8 295.9 L452.9 323M415.1 286.7 L404 322.3M385.2 323.2 L424.7 331.9M413 337.4 L404.2 360.7M397.1 320.2 L418.6 321.3M405 322.2 L424.7 334.4M443.9 336.6 L458.9 369.1M435.8 293.8 L424 311M431.2 334.8 L474.2 337.3M414.8 321.7 L452.3 324.2M78 249.7C79.6 251.6 84.1 257.6 87.6 261.1C91.2 264.6 94.9 268.2 99.2 270.5C103.5 272.9 108.6 274.6 113.4 275.1C118.3 275.6 125.8 273.8 128.3 273.6M159.5 158.7C157.9 160.1 152.3 163.7 149.8 167C147.3 170.3 146.6 174.9 144.5 178.6C142.3 182.2 138.6 185 137 188.8C135.3 192.7 135.1 199.3 134.7 201.4M131.1 239.4C130.3 240.3 127.8 243 126.4 245C125 247.1 124.2 249.5 122.8 251.5C121.3 253.4 119.4 255 117.7 256.8C115.9 258.5 113.2 261 112.3 261.8M570.4 386.6C570.4 384.5 569.8 378.1 570.5 373.9C571.1 369.8 572.8 365.7 574.5 361.9C576.1 358 577.6 353.7 580.3 350.5C583 347.4 588.8 344.2 590.5 342.9M464.4 405.5C464.4 408 463.5 415.9 464.5 420.9C465.4 425.8 467.3 431 470.1 435.2C472.9 439.3 477.1 442.9 481.3 445.8C485.5 448.6 492.9 451.1 495.3 452.2M170.7 395.4C170.2 396.4 168.6 399.5 167.4 401.5C166.3 403.5 164.5 405.3 163.8 407.5C163.1 409.6 163 412.2 163.3 414.4C163.7 416.7 165.5 419.8 165.9 420.9M87.1 267.9C89.1 265.9 95.8 260.5 99.3 256.1C102.7 251.7 105.2 246.5 107.9 241.5C110.6 236.6 113.3 231.6 115.4 226.4C117.6 221.2 119.9 213 120.8 210.3M213.5 130C211.6 128.2 206.5 122 202.2 119.3C197.8 116.6 192.4 115.8 187.6 113.9C182.7 112.1 178.1 109.2 173.1 108.1C168.1 107 160.2 107.4 157.6 107.3M452.7 303.5C454.5 301.7 460.3 296.8 463.6 292.9C466.9 289.1 468.8 283.9 472.4 280.6C476.1 277.2 481.2 275.5 485.5 272.8C489.8 270.1 496.1 265.9 498.2 264.6M279 301.6C279.3 298.8 279.3 290 281.3 285C283.3 279.9 287.6 275.6 291 271.2C294.4 266.8 299.2 263.3 301.9 258.5C304.6 253.7 306.2 245.2 307 242.5M518.8 292.8C521.6 292.4 530.2 291 535.9 290.4C541.6 289.8 547.4 289.7 553.1 289.3C558.8 288.9 564.7 287.3 570.3 288C575.9 288.6 584 292.3 586.8 293.1M252.8 211.2C252.5 212.6 251.3 216.7 250.8 219.5C250.4 222.3 250.7 225.3 250.1 228C249.5 230.8 247.8 233.3 247.2 236C246.7 238.8 246.7 243.1 246.5 244.5M227 224.3C229.5 224.9 237.2 226.5 242.2 228C247.2 229.6 251.9 231.9 256.9 233.5C261.9 235.1 267 237.1 272.1 237.5C277.2 237.9 285.1 236.2 287.7 236M529.8 321C531.1 320.8 535.1 319.9 537.8 319.7C540.5 319.6 543.4 319.5 546 320.1C548.6 320.8 550.7 322.9 553.3 323.7C555.9 324.5 560 324.8 561.4 325M507.9 254.6C507.1 252.1 504 244.6 503.2 239.4C502.5 234.2 503.6 228.7 503.3 223.4C502.9 218.1 503.2 212.4 501.3 207.6C499.5 202.7 493.7 196.7 492.2 194.5M327.9 359.7C328.9 361.1 331.3 366.2 333.8 368.5C336.4 370.8 339.9 372.2 343.1 373.6C346.4 375 349.8 376 353.2 376.9C356.7 377.8 361.9 378.7 363.7 379.1M305.4 406.3C302.7 407.2 294.6 411.2 289 411.8C283.4 412.4 277.4 411.1 271.8 409.9C266.2 408.8 260.6 407 255.2 404.8C249.9 402.7 242.4 398.3 239.8 397M343.7 444.5C342 445.8 337 449.9 333.6 452.6C330.3 455.3 326.5 457.6 323.4 460.6C320.3 463.5 317.1 466.8 315.2 470.5C313.2 474.2 312.3 480.9 311.7 482.9M60.1 267.3C58.2 265.7 52.9 260.5 48.9 257.6C45 254.7 39.7 253.4 36.1 250.2C32.6 246.9 30.9 241.7 27.6 238.1C24.3 234.4 18.4 229.9 16.6 228.2M456.8 153.8C457.9 151.8 460.4 145.1 463.2 141.6C466 138.1 470 135.3 473.8 132.7C477.5 130.2 481.5 127.5 485.8 126C490.1 124.5 497.1 124.1 499.4 123.7M471.1 369.4C470.8 371.4 469.4 377.4 469.4 381.3C469.4 385.3 471.4 389.4 470.9 393.3C470.5 397.2 468.2 400.9 466.8 404.6C465.3 408.4 462.9 413.9 462.1 415.8M253.2 126.2C252.1 126.9 248.7 129.5 246.1 130.4C243.6 131.3 240.7 131.7 238 131.5C235.3 131.4 232.6 130.2 230 129.3C227.4 128.4 223.7 126.7 222.4 126.2M249 168.6C248.6 166.5 247.8 160.3 246.9 156.3C245.9 152.2 243.7 148.4 243.3 144.3C242.8 140.3 244.6 136 244.4 131.9C244.2 127.8 242.4 121.7 242 119.7M197.8 232.1C195.4 230.9 187.8 227.8 183 225.2C178.2 222.6 173.3 219.9 169.2 216.4C165.1 212.9 162.4 207.7 158.2 204.3C154.1 200.8 146.7 197.1 144.4 195.6M44.6 351.4C46.4 349.4 51.9 343.5 55.3 339.4C58.8 335.2 62 330.9 65.1 326.5C68.2 322.1 70.9 317.4 73.9 313C76.9 308.5 81.5 301.9 83 299.7M575.9 245.9C574.6 247.6 570 252.5 567.9 256.2C565.8 260 563.9 264.3 563.4 268.5C563 272.7 563.7 277.4 565 281.5C566.4 285.6 570.3 291 571.4 292.9M360 366.4C360.4 367.7 361.9 371.6 362.6 374.3C363.3 377 363.9 379.8 364.1 382.6C364.3 385.4 364.3 388.2 364 391C363.6 393.7 362.3 397.8 361.9 399.1M43.7 318.9C44.7 316.2 46.8 307.7 49.6 302.9C52.4 298.1 56.6 293.9 60.5 289.9C64.5 285.8 68.5 281.3 73.3 278.6C78.1 275.9 86.8 274.4 89.6 273.6M149.5 403.7C149.9 401.8 151.4 396.1 151.5 392.3C151.6 388.5 151.1 384.4 149.9 380.8C148.8 377.1 147 373.4 144.6 370.5C142.2 367.5 137.1 364.3 135.6 363.1M100.9 371.3C102.4 373.2 107.7 378.6 110.1 382.8C112.5 387.1 114.3 391.9 115.3 396.7C116.3 401.4 116.4 406.5 116.1 411.4C115.9 416.3 114.2 423.6 113.8 426M588.1 507.8C585.5 506.7 577.8 502.3 572.3 501.3C566.8 500.2 560.6 500.2 555.2 501.4C549.7 502.6 544.4 505.6 539.7 508.7C535 511.9 529.2 518.3 527 520.2M241.3 308.5C239.4 306.9 234.1 301.9 230.3 298.9C226.5 295.8 222.3 293.3 218.4 290.4C214.5 287.4 210.9 284.1 206.9 281.3C202.9 278.6 196.4 275.1 194.4 273.8M79.2 363.8C77.5 365.5 73.2 371.4 69.4 373.8C65.6 376.2 60.7 377.8 56.2 378.3C51.7 378.8 46.9 376.3 42.4 376.7C37.8 377.2 31.3 380.3 29.1 381M484.4 413.5C484.1 414.7 482.9 418.3 482.4 420.8C481.9 423.3 482.1 425.9 481.5 428.3C480.9 430.7 480.2 433.3 478.9 435.4C477.5 437.5 474.4 439.9 473.5 440.8M246.1 241.2C243.8 240.6 237 238.8 232.6 237.3C228.1 235.9 223.9 233.6 219.4 232.4C214.8 231.2 210.1 230.6 205.4 230.3C200.8 229.9 193.7 230.4 191.3 230.4M540.1 332.7C541.9 332.8 547.4 332.8 551.1 333.3C554.7 333.8 558.2 335.7 561.8 335.7C565.4 335.7 569.1 334.6 572.5 333.5C576 332.3 580.8 329.6 582.5 328.8M65.6 316C67.6 315.6 73.6 313.4 77.7 313.4C81.7 313.5 85.7 316.1 89.7 316.2C93.7 316.3 97.9 315 101.8 313.9C105.8 312.9 111.6 310.6 113.5 309.9M516.6 127C516 125.5 514.4 120.5 512.7 117.5C511.1 114.5 508.7 111.9 506.6 109.2C504.6 106.4 502.5 103.7 500.2 101.1C497.9 98.6 494.1 95.1 492.9 93.9M331.1 146.3C331.8 149 333.9 157.4 335.4 162.9C336.9 168.4 337.6 174.5 340.2 179.4C342.9 184.4 347.2 188.7 351.3 192.6C355.4 196.6 362.7 201.3 365 203.1M607.4 399.8C606.3 399.9 602.9 400.4 600.6 400.2C598.4 400 596.2 399.2 593.9 398.7C591.7 398.3 589.4 398.1 587.2 397.7C584.9 397.2 581.6 396.3 580.5 396M574.4 383.1C573.4 382.6 570.1 381.7 568.2 380.6C566.3 379.5 564.7 377.8 562.9 376.6C561.1 375.3 558.9 374.5 557.3 373.1C555.7 371.6 554 368.6 553.3 367.7M526 491.1C523.5 492.6 516.2 497.9 510.7 499.6C505.3 501.4 498.8 500 493.3 501.6C487.8 503.3 483.2 507.7 477.7 509.5C472.3 511.4 463.4 512.2 460.5 512.7M271.4 513.8C272.8 513.7 277.2 513.5 280 512.8C282.8 512.2 285.5 510.9 288.2 509.9C290.9 508.9 293.7 508.1 296.3 506.7C298.8 505.4 302.3 502.7 303.5 501.9M425.6 174.3C427.1 175.5 431.6 179 434.7 181.1C437.9 183.2 441.8 184.3 444.6 186.8C447.4 189.2 449.9 192.5 451.6 195.8C453.2 199.1 454.1 205 454.6 206.8M129 132.4C130.6 130 136.3 123.4 138.5 118.2C140.7 113.1 141.8 107.2 142.4 101.6C142.9 96 140.8 90 141.7 84.6C142.7 79.1 147.1 71.4 148.1 68.7M596.6 137.4C597.7 138.9 601.4 143.1 603.2 146.3C605.1 149.5 605.8 153.2 607.4 156.6C609.1 159.9 611.6 162.8 612.9 166.2C614.3 169.6 615.1 175.2 615.6 176.9M100.9 332.3C102.9 331.1 109.5 327.9 112.8 324.7C116.2 321.5 118 316.8 121 313.2C124 309.5 127.7 306.5 130.7 302.9C133.7 299.3 137.7 293.4 139.1 291.5M237.6 316.1C234.9 315.4 226.5 313.4 221.1 311.8C215.6 310.1 210.4 307.5 204.9 306.3C199.3 305.2 193.5 305.5 187.8 304.9C182.1 304.2 173.7 303 170.8 302.6M466.5 178.4C464.6 179.8 459.1 184.4 454.9 186.6C450.7 188.7 445.9 189.5 441.5 191.3C437.1 193 432.9 195.2 428.6 197.1C424.3 199 417.8 201.9 415.6 202.8M390.2 442.2C392.2 441.9 398.1 441.5 402 440.9C405.9 440.2 409.9 439.4 413.6 438.2C417.4 437 421.5 436.1 424.7 433.8C427.8 431.6 431.1 426.4 432.4 424.9M192.9 305C191 302.9 185.4 296.8 181.8 292.6C178.2 288.4 174.2 284.4 171.1 279.8C168 275.2 164.8 270.3 163.4 265.1C161.9 259.8 162.7 251.2 162.6 248.4M604.2 520.2C603.3 521.2 600 523.9 598.7 526.1C597.3 528.4 596.8 531.2 596 533.8C595.2 536.4 594.8 539.1 593.7 541.6C592.7 544.1 590.4 547.5 589.7 548.6M338.6 280.5C340.1 279.8 344.3 277.4 347.4 276.6C350.5 275.7 353.9 276.5 357 275.7C360 274.8 362.9 273.1 365.6 271.4C368.4 269.8 372.2 266.9 373.5 266M316.9 351.4C318.1 352.8 321.3 357.7 324.3 360C327.2 362.3 331 363.6 334.5 364.9C338 366.3 341.7 367.8 345.4 368.2C349.1 368.6 354.8 367.6 356.7 367.5M615.5 230.3C614.5 232.6 611 239.4 609.6 244.2C608.2 249 608.7 254.4 607.1 259C605.5 263.7 602.6 268.1 600 272.3C597.3 276.6 592.7 282.5 591.2 284.6M250.2 376.5C249.7 378 248 382.3 247.1 385.2C246.1 388.1 245.8 391.4 244.4 394C243 396.7 240.1 398.5 238.6 401.1C237.1 403.8 235.9 408.3 235.3 409.8M91.6 145.8C90.5 144 87.9 138 85 135.1C82.1 132.2 77.5 131.2 74.4 128.4C71.3 125.7 69.1 122 66.4 118.7C63.7 115.5 59.7 110.7 58.4 109.1M554.8 140.9C553.9 140 551.1 137.5 549.4 135.6C547.7 133.7 546.1 131.7 544.7 129.7C543.2 127.7 542.2 125.2 540.6 123.3C539 121.4 535.9 119.1 534.9 118.3M603.8 169.4C606.2 169.4 613.3 170.3 617.8 169.3C622.2 168.3 626.2 165.5 630.4 163.4C634.6 161.4 638.5 158.8 642.8 157C647.1 155.2 653.8 153.3 656 152.5M567.9 413.3C569.5 414.9 573.8 420.4 577.5 422.8C581.2 425.3 586.1 425.8 589.9 428.1C593.8 430.3 596.8 434 600.6 436.3C604.4 438.6 610.9 440.8 613 441.7M193.4 125.6C194.3 123.8 197 118.4 198.7 114.8C200.4 111.1 202.7 107.6 203.6 103.8C204.6 99.9 204.8 95.7 204.5 91.7C204.3 87.8 202.4 81.9 202 79.9M171.2 503.7C171.7 504.8 172.8 508.4 174.2 510.3C175.6 512.2 177.8 513.6 179.6 515.1C181.5 516.6 183.6 517.9 185.4 519.4C187.2 521 189.7 523.6 190.6 524.5M415.5 194.9C416.5 196.6 419.3 201.8 421.3 205.2C423.3 208.6 425.6 211.8 427.6 215.1C429.6 218.5 432.1 221.8 433.2 225.5C434.2 229.2 433.9 235.3 434.1 237.3M96.5 232.1C94.6 231.4 88.8 229.3 85 227.8C81.3 226.2 77.4 224.8 73.8 222.8C70.2 220.9 67 218.2 63.5 216.1C60 214 54.5 211.2 52.7 210.2M499.9 459.4C499.8 460.6 499.5 464.4 499.6 466.8C499.7 469.3 500.7 471.8 500.4 474.2C500.2 476.7 498.8 479 498.4 481.4C498 483.9 498.1 487.6 498 488.9M402.1 381.3C403.4 381.2 407.2 381.4 409.7 381.2C412.2 381 414.8 380.8 417.2 379.9C419.5 379.1 421.3 377.1 423.5 375.9C425.7 374.7 429.3 373.2 430.4 372.7M537.8 358C540.6 358.6 549.1 359.9 554.6 361.4C560.1 362.9 565.7 364.5 570.9 367C576 369.4 580.3 373.7 585.5 376.1C590.6 378.5 599.1 380.6 601.8 381.5M262.7 256.7C263.5 257.6 265.8 260.2 267.4 261.8C269.1 263.4 271.2 264.7 272.6 266.5C274 268.3 274.3 270.9 275.8 272.7C277.2 274.4 280.4 276.3 281.3 277M195.2 197.1C197.7 197.2 205.3 197.5 210.3 197.7C215.4 197.9 220.6 199.1 225.5 198.4C230.4 197.6 235 195.1 239.7 193.2C244.4 191.3 251.1 187.9 253.4 186.9M147.7 135.8C146.1 135.7 141.4 135.7 138.2 135.6C135 135.5 131.7 136.1 128.7 135.3C125.7 134.6 122.6 133.1 120.2 131.1C117.8 129.2 115.3 124.9 114.3 123.6M299.1 166.1C299.3 164.9 300.4 161.1 300.3 158.6C300.2 156.2 298.4 153.8 298.3 151.4C298.3 148.9 299.4 146.5 300 144C300.6 141.6 301.7 138 302 136.7M281 233.9C278.3 233.2 270 230.2 264.4 229.7C258.7 229.1 252.9 230.2 247.2 230.4C241.5 230.6 235.5 231.9 230 230.9C224.5 229.9 216.8 225.4 214.1 224.3M245.9 378.5C247.5 378.2 252.4 377.2 255.6 376.6C258.9 376 262.3 376 265.4 374.9C268.4 373.8 271.6 372.1 273.9 369.9C276.3 367.7 278.5 363 279.5 361.6M597.5 311.4C594.9 312.2 586.9 314.5 581.6 316C576.3 317.6 570.8 318.6 565.7 320.7C560.6 322.7 556.2 326.6 551.1 328.6C546 330.6 537.8 332.1 535.1 332.8M166.7 313.2C166 311.1 164.6 304.6 162.7 300.8C160.8 296.9 157.3 293.9 155.2 290.1C153.1 286.3 151.2 282.3 149.9 278.1C148.7 274 147.9 267.4 147.5 265.3M69.8 524C71 524.6 74.7 526.3 77.2 527.4C79.7 528.4 82.3 529.2 84.7 530.4C87.2 531.5 89.8 532.5 91.9 534.2C94 535.9 96.4 539.3 97.3 540.3M108 404.5C109.9 405.3 115.7 408.2 119.7 409.6C123.7 411 127.8 412.8 132 413C136.1 413.2 140.3 411 144.6 410.8C148.8 410.5 155.2 411.2 157.3 411.3M82.2 430.7C80.8 432.3 76.7 437.3 74 440.7C71.3 444 69.2 448 66 450.8C62.8 453.6 58.8 456 54.8 457.3C50.8 458.6 44.1 458.4 42 458.6M183 258.5C183.8 257.5 186.5 254.7 188.1 252.7C189.7 250.7 190.7 248.1 192.7 246.4C194.6 244.8 197.6 244.5 199.6 243C201.6 241.5 203.9 238.2 204.8 237.2M418.3 427.8C418.7 426.8 419.8 423.9 420.2 421.8C420.7 419.8 420.4 417.6 421 415.6C421.6 413.7 422.7 411.8 423.8 410.1C424.9 408.3 426.9 405.8 427.6 405M270.5 460.1C270.1 458.4 269 453.5 268.2 450.3C267.4 447 266.3 443.8 265.9 440.5C265.5 437.1 265.6 433.7 265.7 430.4C265.9 427 266.5 422 266.7 420.4M507.3 188.7C506.3 188.5 503.1 187.9 501.2 187.1C499.3 186.3 497.4 185.3 495.8 184C494.2 182.7 493.4 180.4 491.8 179.2C490.1 178 487 177.1 486 176.7M342.7 316.4C343.2 317.8 345.2 321.7 345.6 324.5C346.1 327.2 345.2 330.2 345.6 333C345.9 335.8 347.5 338.5 347.7 341.2C348 344 347.2 348.3 347.1 349.8M415.8 279C414.6 278 411.5 274.6 408.9 273.4C406.3 272.2 403.1 272.5 400.3 271.7C397.4 270.9 394.7 269.8 392 268.7C389.3 267.6 385.3 265.6 384 265M474.1 326.5C472.5 326.8 467.7 327.4 464.5 328.2C461.4 329 458.4 330.3 455.3 331.1C452.2 331.9 449 332.8 445.8 333C442.6 333.3 437.7 332.6 436.1 332.5M285.5 399.5C286.6 400.5 289.8 404 292.4 405.6C294.9 407.1 297.9 408.5 300.9 408.9C303.9 409.4 307.2 409.2 310.1 408.3C312.9 407.4 316.6 404.3 317.9 403.5M488.4 167.5C486.5 167.4 481 167.2 477.2 167.1C473.5 167 469.8 167 466.1 166.9C462.3 166.8 458.4 165.8 454.9 166.5C451.3 167.2 446.4 170.4 444.7 171.2M506.8 432C505.2 429.9 499.8 424.2 497 419.8C494.2 415.4 491.4 410.7 490 405.8C488.5 400.9 488.5 395.5 488.2 390.3C487.9 385.1 488.2 377.2 488.2 374.6M17.8 478.8C19 478.1 22.9 476.3 25.3 474.7C27.6 473.2 30.2 471.6 32 469.5C33.8 467.4 34.9 464.6 36.2 462.1C37.4 459.5 38.8 455.5 39.3 454.2M61.3 213.1C63.1 212.7 68.5 211.3 72.2 211.1C75.8 210.9 79.6 211.7 83.2 211.6C86.9 211.6 90.7 211.8 94.3 211C97.8 210.1 102.8 207.4 104.5 206.7M606.6 482.8C605.9 481.5 604 477.6 602.6 475.1C601.2 472.5 599.8 470 598.2 467.6C596.6 465.1 595.3 462.3 593.2 460.5C591 458.7 586.7 457.2 585.4 456.5M292.6 432.1C292.1 429.5 290 421.6 289.8 416.4C289.6 411.1 289.8 405.5 291.3 400.5C292.7 395.5 295.1 390.3 298.3 386.2C301.6 382.2 308.6 377.8 310.6 376.1M505.4 291.4C505 289.2 503.3 282.5 502.9 278C502.6 273.5 503.3 268.9 503.3 264.4C503.3 259.8 503.7 255.1 502.9 250.7C502.1 246.3 499.2 240 498.4 237.8M211.6 225.1C210 223.3 204.9 217.8 201.6 214.1C198.4 210.4 194.5 206.9 192 202.7C189.5 198.5 188.8 193.3 186.7 188.8C184.7 184.3 180.8 177.8 179.6 175.7M64.8 367.2C64.1 368.4 61.7 371.7 61 374.2C60.4 376.6 60.6 379.5 61 382C61.5 384.6 62.7 387 63.7 389.4C64.7 391.9 66.4 395.4 67 396.6M71.2 127.4C69 125.7 62.4 120.1 57.6 117.1C52.9 114.1 46.8 112.9 42.5 109.4C38.2 105.8 36.2 99.6 31.9 96C27.6 92.5 19.3 89.5 16.8 88.2M99.9 127.7C101.7 129 106.9 132.8 110.5 135.3C114 137.8 118.1 139.8 121.2 142.7C124.3 145.6 126.5 149.6 129.2 152.9C132 156.3 136.4 161.1 137.8 162.8M584.7 368.2C583.4 368 579.3 367.3 576.6 366.9C573.9 366.6 571.1 366.8 568.5 366.1C565.9 365.4 563.7 363.5 561.1 362.8C558.5 362 554.3 361.7 553 361.5M190.9 451.6C192.9 452 199.1 452.7 203.1 453.7C207 454.7 210.9 456.1 214.7 457.6C218.5 459.2 222 461.8 225.9 462.7C229.8 463.6 236.1 462.9 238.2 462.9M465.8 287.9C464 289.9 458.4 295.6 455.3 299.8C452.2 304.1 450.3 309.2 447.2 313.5C444.1 317.8 439.4 321.1 436.9 325.6C434.3 330.1 432.5 338.1 431.7 340.6M332.4 158C331 155.6 327.5 147.7 323.8 143.9C320 140.1 314.4 138 309.7 135.1C305.1 132.1 300.5 129 295.9 126.1C291.2 123.1 284 118.9 281.7 117.5M284.6 185.5C285 187.3 286.8 192.7 287.4 196.4C288 200.1 287.5 204 288.3 207.7C289 211.3 290.4 215 292 218.4C293.5 221.8 296.8 226.4 297.8 228M62.3 246C63.4 244.9 66.8 241.5 68.7 239C70.6 236.5 71.7 233.1 73.9 231C76.2 228.8 79.8 228.2 82.1 226C84.3 223.9 86.6 219.5 87.6 218.2M221.1 208.6C219.7 207.3 214.9 203.9 212.7 200.9C210.4 197.9 209.5 193.9 207.5 190.7C205.5 187.4 202.6 184.7 200.7 181.5C198.7 178.2 196.5 172.9 195.6 171.2M290.7 473.7C292.2 473.9 296.5 474.9 299.5 475C302.4 475.1 305.3 474 308.2 474.3C311.1 474.5 313.9 475.6 316.8 476.3C319.7 477 323.9 478.1 325.4 478.4M223.8 327.7C224.9 326 228 320.4 230.5 317C232.9 313.6 235.8 310.4 238.7 307.4C241.6 304.3 245 301.8 248 298.8C251 295.8 255 290.9 256.5 289.4M274 177.7C271.8 179.1 264.8 183.3 260.5 186.5C256.2 189.7 252.5 193.7 248.3 197C244 200.3 239.6 203.4 235 206.2C230.5 209.1 223.3 212.9 221 214.2M115.7 303.4C115.1 302.4 113.3 299.5 112.5 297.4C111.7 295.4 111 293.1 110.9 290.9C110.8 288.7 112.1 286.5 112 284.3C111.9 282.1 110.6 278.9 110.3 277.8M56.4 375.6C56.9 377.8 58.5 384.5 59.7 388.8C61 393.2 61.7 397.9 63.7 401.9C65.7 405.9 68.7 409.5 71.7 412.9C74.7 416.3 79.9 420.8 81.5 422.4M442.6 329C444.4 327.1 449.4 320.8 453.6 317.7C457.7 314.7 463.5 313.8 467.7 310.8C471.9 307.8 475.2 303.5 478.9 299.8C482.6 296.1 488 290.4 489.8 288.5"/>
<path fill="none" stroke="#707070" stroke-width="1.4" stroke-linecap="round" stroke-linejoin="round" d="M3.8 188.1C6 188.6 10.2 192.4 17.4 191C24.7 189.7 37.3 183.1 47.2 180.1C57.1 177.1 67.5 176 77 173.2C86.5 170.3 94.8 165.9 104.3 163.2C113.8 160.5 126.2 157 134.1 157C141.9 157 146.1 160.1 151.5 163.2C156.8 166.3 161.8 171 166.3 175.6C170.9 180.3 172.6 186.9 178.8 191C185 195.2 197.4 199.5 203.6 200.5C209.8 201.4 213.9 197.4 216 196.7M47.2 206.7C52.2 204.4 67.5 197.6 77 193C86.5 188.5 96.8 182.9 104.3 179.4C111.7 175.9 116.3 173 121.7 171.9C127 170.9 134.1 173 136.6 173.2M50.9 220.3C52.2 222.8 56.3 230.3 58.4 235.2C60.4 240.2 62.1 246 63.3 250.1C64.6 254.3 65.4 258.4 65.8 260M173.8 222.8C174.6 225.7 174.6 236.5 178.8 240.2C182.9 243.9 192.4 246 198.6 245.1C204.8 244.3 213.1 236.9 216 235.2M264.6 124.8C266.3 127.4 270.4 136.5 274.6 140.9C278.7 145.2 280.8 146.7 289.5 150.8C298.2 155 315.1 160.3 326.7 165.7C338.3 171.1 349 179 359 183.1C368.9 187.2 378.8 186.8 386.3 190.5C393.7 194.3 397 199.6 403.7 205.4C410.3 211.2 422.3 222 426 225.3M213.8 233.2C217.3 230.9 227.6 222.5 234.9 219.1C242.1 215.7 251.4 213.1 257.2 212.9C263 212.7 263 212.9 269.6 217.8C276.2 222.8 290.1 236.3 296.9 242.7C303.7 249.1 308.3 254 310.6 256.3M294.4 242.7C299.8 241 316.8 236.5 326.7 232.7C336.6 229 346.1 224.5 354 220.3C361.9 216.2 370.6 210 373.9 207.9M349 140.9C350.7 143.8 356.1 152.5 359 158.3C361.9 164.1 365.4 169 366.4 175.6C367.5 182.3 365.6 190.5 365.2 198C364.8 205.4 364.1 212.5 363.9 220.3C363.7 228.2 363.9 241 363.9 245.1M386.3 190.5C390 194.3 402 209.2 408.6 212.9C415.2 216.6 423.1 212.9 426 212.9M229.9 188.1C230.3 191.4 231.5 202.7 232.4 207.9C233.2 213.1 234.4 217.2 234.9 219.1M555.3 124.8C551.4 127.4 539.4 136.5 531.7 140.9C524.1 145.2 518.9 144.6 509.4 150.8C499.9 157 485.4 169 474.6 178.1C463.9 187.2 453.3 197.6 444.9 205.4C436.4 213.3 427.3 222 423.8 225.3M511.9 150.8C516 149.8 530.3 146.4 536.7 144.6C543.1 142.9 548.1 141.1 550.4 140.4M588.8 124.8C589 131.2 588.4 152.7 590.1 163.2C591.7 173.8 591.1 179.8 598.8 188.1C606.4 196.3 629.8 208.7 636 212.9M549.1 175.6C549.5 179.8 550.4 192.2 551.6 200.5C552.8 208.7 555.7 220.3 556.6 225.3C557.4 230.3 556.6 229.4 556.6 230.3M423.8 212.9C428.1 213.3 442.2 213.3 449.8 215.4C457.5 217.4 464.3 220.3 469.7 225.3C475.1 230.3 480 241.8 482.1 245.1M482.1 243.9C489.1 243.9 509 245.8 524.3 243.9C539.6 242 557.4 237.1 573.9 232.7C590.5 228.4 613.2 223.2 623.6 217.8C633.9 212.5 633.9 203.4 636 200.5M430 135.9C431.6 138.8 437.8 146.7 439.9 153.3C442 159.9 442 171.9 442.4 175.6M65.8 257.8C67.3 260.4 72 267.5 74.5 273.9C77 280.3 79.1 288.4 80.7 296.2C82.4 304.1 82.6 314.9 84.4 321.1C86.3 327.3 87.7 328.9 91.9 333.5C96 338 101.4 345.1 109.3 348.4C117.1 351.7 129.9 352.1 139 353.3C148.1 354.6 156.4 353.3 163.9 355.8C171.3 358.3 177.1 364.1 183.7 368.2C190.3 372.4 200.3 378.6 203.6 380.6M3.8 378.1C10.2 379.5 30.4 385.3 42.2 386.1C54 386.9 67.5 385.3 74.5 383.1C81.5 381 82.4 378.1 84.4 373.2C86.5 368.2 84.4 357.8 86.9 353.3C89.4 348.9 97.3 347.5 99.3 346.4M213.8 318.6C217.3 317.3 228 312.2 234.9 311.1C241.7 310.1 248.9 309.5 254.7 312.4C260.5 315.3 265.5 322.9 269.6 328.5C273.7 334.1 277.9 343 279.5 345.9M324.2 365.7C327.5 366.2 337.5 367 344.1 368.2C350.7 369.5 356.5 373.2 363.9 373.2C371.4 373.2 384.6 369 388.8 368.2M334.1 308.6C333.7 311.1 331.3 318.2 331.7 323.5C332.1 328.9 335.8 338 336.6 340.9M403.7 288.8 L411.1 303.7M244.8 273.9C248.1 274.7 256 277.2 264.6 278.9C273.3 280.5 286.2 285.1 296.9 283.8C307.7 282.6 319.7 274.7 329.2 271.4C338.7 268.1 346.6 266 354 264C361.5 261.9 370.6 259.8 373.9 259M289.5 392C293.6 391.4 305.2 390.4 314.3 388.1C323.4 385.8 335.8 380.6 344.1 378.1C352.4 375.7 360.6 374 363.9 373.2M373.9 333.5C376.3 333.1 383.8 333.5 388.8 331C393.7 328.5 401.2 320.6 403.7 318.6M529.3 313.6C529.7 315.7 530.1 321.5 531.7 326C533.4 330.6 537.5 334.7 539.2 340.9C540.8 347.1 541.3 354.6 541.7 363.3C542.1 371.9 541.7 388.1 541.7 393M554.1 316.1 L559 306.2M434.9 283.8 L436.2 303.7M479.6 338.4C484.2 338.6 501.1 338.4 506.9 339.7C512.7 340.9 513.5 341.1 514.4 345.9C515.2 350.6 511.5 362 511.9 368.2C512.3 374.4 516 380.6 516.8 383.1M554.1 363.3C558.2 362.4 570.6 357.5 578.9 358.3C587.2 359.1 594.2 363.3 603.7 368.2C613.2 373.2 630.6 384.8 636 388.1M484.6 259C485.4 261.5 487.1 270 489.5 273.9C492 277.8 497.8 281.1 499.5 282.6M534.2 326C536.7 326.8 545.4 328.5 549.1 331C552.8 333.5 555.3 339.3 556.6 340.9M216 401.9C212.3 403.6 201.9 408.3 193.7 411.9C185.4 415.4 176.3 418.7 166.3 423C156.4 427.4 142.4 433.6 134.1 437.9C125.8 442.3 121.7 444.5 116.7 449.1C111.7 453.6 110.5 458.6 104.3 465.2C98.1 471.8 85.3 482.4 79.5 488.8C73.7 495.2 71.8 497.5 69.5 503.7C67.3 509.9 66.4 522.3 65.8 526M158.9 392C162.2 394.5 173 403.6 178.8 406.9C184.6 410.2 191.2 411 193.7 411.9M284.5 406.9C284.1 409.8 279.5 420.1 282 424.3C284.5 428.4 293.2 429.6 299.4 431.7C305.6 433.8 313 433 319.3 436.7C325.5 440.4 330.8 448.3 336.6 454.1C342.4 459.8 347.8 465.2 354 471.4C360.2 477.6 368.1 486.3 373.9 491.3C379.7 496.3 383 497.1 388.8 501.2C394.6 505.4 404.5 512 408.6 516.1C412.8 520.3 412.8 524.4 413.6 526M213.8 495C218.1 495.2 231.3 495.2 239.8 496.3C248.3 497.3 256.4 499.6 264.6 501.2C272.9 502.9 282 506.6 289.5 506.2C296.9 505.8 306 500 309.3 498.7M359 464C363.9 461.9 379.7 454.1 388.8 451.6C397.9 449.1 407.4 448.3 413.6 449.1C419.8 449.9 423.9 455.3 426 456.5M239.8 392C243.1 392.8 252 397.2 259.7 397C267.3 396.8 281.4 391.8 285.7 390.8M354 471.4C354.8 474.7 359.8 484.7 359 491.3C358.1 497.9 353.2 505.5 349 511.1C344.9 516.8 336.6 522.7 334.1 525M489.5 436.7C495.3 436.3 515.2 435.4 524.3 434.2C533.4 433 540.8 430.1 544.1 429.2M423.8 457C428.1 454.5 443.4 443.4 449.8 441.6C456.2 439.9 460.2 445.8 462.2 446.6M524.3 456.5C528.4 457.8 540.8 461.1 549.1 464C557.4 466.9 565.7 469.4 573.9 473.9C582.2 478.5 588.2 488 598.8 491.3C609.3 494.6 630.8 493.4 637.2 493.8M494.5 478.9C495.3 480.1 492.8 483.8 499.5 486.3C506.1 488.8 526.8 490.5 534.2 493.8C541.7 497.1 542.5 504.1 544.1 506.2M544.1 406.9 L544.1 426.8M477.1 441.6C477.5 445 479.6 456.1 479.6 461.5C479.6 466.9 477.5 471.8 477.1 473.9"/>
<path fill="none" stroke="#707070" stroke-width="1.6" stroke-linecap="round" stroke-linejoin="round" d="M423.8 282.6C428.1 282.4 437.2 281.3 449.8 281.3C462.4 281.3 487.1 281.8 499.5 282.6C511.9 283.4 516 284.4 524.3 286.3C532.6 288.2 540.8 290.9 549.1 293.8C557.4 296.6 565.7 301.6 573.9 303.7C582.2 305.7 588.4 305.3 598.8 306.2C609.1 307 629.8 308.2 636 308.6M444.9 338.4C446.9 340.5 454 346.7 457.3 350.8C460.6 355 463.5 361.2 464.7 363.3M467.2 390.8C468 394.3 468 406.7 472.2 411.9C476.3 417 487.9 416.8 492 421.8C496.2 426.8 496 433.4 497 441.6C498 449.9 500.3 464.8 498.2 471.4C496.2 478.1 489.7 477.2 484.6 481.4C479.4 485.5 472.2 491.7 467.2 496.3C462.2 500.8 456.9 506.6 454.8 508.7"/>
<path fill="none" stroke="#f8c47c" stroke-width="1.9" stroke-linecap="round" stroke-linejoin="round" d="M132.1 124.8C130.8 126.6 127.5 133.9 124.1 135.9C120.8 138 114.6 134.7 111.7 137.2C108.8 139.7 108 147.3 106.8 150.8C105.5 154.3 104.1 155 104.3 158.3C104.5 161.6 106.8 165.7 108 170.7C109.3 175.6 110.3 183.1 111.7 188.1C113.2 193 115.9 198.4 116.7 200.5M5 179.4C7.5 179.7 12.9 180.7 19.9 181.1C26.9 181.5 37.3 183.4 47.2 181.9C57.1 180.3 70 175 79.5 171.9C89 168.8 100.2 164.7 104.3 163.2M77 207.9C79.5 206.3 86.1 199.6 91.9 198C97.7 196.3 108.4 198 111.7 198M101.8 217.8C105.1 219.1 116.3 222 121.7 225.3C127 228.6 128.7 234.8 134.1 237.7C139.5 240.6 150.6 241.8 153.9 242.7M37.3 198 L36 207.9M168.8 203C171.3 203.2 180.8 201.3 183.7 204.2C186.6 207.1 183.3 215.2 186.2 220.3C189.1 225.5 196.1 230.3 201.1 235.2C206.1 240.2 213.5 247.6 216 250.1M158.9 217.8C158.5 220.7 157.9 231.1 156.4 235.2C155 239.4 151.2 241.4 150.2 242.7M163.9 178.1C165.9 180.6 173 188.7 176.3 193C179.6 197.4 182.5 202.3 183.7 204.2M306.8 168.2C307.3 172.3 306.8 186.4 309.3 193C311.8 199.6 318.8 202.5 321.7 207.9C324.6 213.3 323.8 219.1 326.7 225.3C329.6 231.5 336.2 239.5 339.1 245.1C342 250.8 343.3 256.7 344.1 259M215 238.2C219.1 237.3 229.5 234.5 239.8 232.7C250.2 231 268.4 227.4 277.1 227.8C285.7 228.2 287.8 231.5 292 235.2C296.1 238.9 299.4 246 301.9 250.1C304.4 254.3 306 258.4 306.8 260M349 150.8C351.5 153.3 359.8 161.6 363.9 165.7C368.1 169.9 370.1 172.7 373.9 175.6C377.6 178.5 380.5 183.1 386.3 183.1C392.1 183.1 402 177.3 408.6 175.6C415.2 174 423.1 173.6 426 173.2M229.9 175.6C231.1 179 235.7 188.1 237.3 195.5C239 203 238.9 213.3 239.8 220.3C240.7 227.4 243.6 231.1 242.8 237.7C242 244.3 236.2 256.3 234.9 260M277.1 260C278.7 257.6 284.5 249.3 287 245.1C289.5 241 291.1 236.9 292 235.2M252.2 126C253.9 126.8 260.1 129.3 262.2 131C264.2 132.6 264.2 135.1 264.6 135.9M215 200.5C216.7 200.1 221.2 198.8 224.9 198C228.7 197.2 235.3 195.9 237.3 195.5M306.8 168.2C308.9 167 315.1 162.4 319.3 160.8C323.4 159.1 328.8 160.3 331.7 158.3C334.6 156.2 335.8 150 336.6 148.3M373.9 175.6C374.3 179 377.2 190.1 376.3 195.5C375.5 200.9 370.1 205.8 368.9 207.9M386.3 183.1C388.3 186 394.6 194.7 398.7 200.5C402.8 206.3 406.7 212.9 411.1 217.8C415.5 222.8 422.7 228.2 425 230.3M396.2 215.4C396.6 219.1 398.7 230.4 398.7 237.7C398.7 245 396.6 255.5 396.2 259M344.1 247.6C347.4 245.6 359 238.9 363.9 235.2C368.9 231.5 372.2 226.9 373.9 225.3M461 124.8C460.2 128.3 457.5 139.4 456 145.9C454.6 152.3 452.9 160.3 452.3 163.2M436.2 163.2C436.4 165.3 436 171.1 437.4 175.6C438.9 180.2 443.6 188.1 444.9 190.5M539.2 140.9C537.9 144.6 535.5 155.8 531.7 163.2C528 170.7 520.6 180.2 516.8 185.6C513.1 191 510.6 193.8 509.4 195.5M534.2 158.3 L549.1 173.2M425 227.8C429.1 227.4 441.5 227.8 449.8 225.3C458.1 222.8 468 216.2 474.6 212.9C481.3 209.6 485 209.2 489.5 205.4C494.1 201.7 499.9 193 502 190.5M504.4 222.8C507.7 222.6 516.8 222.2 524.3 221.6C531.7 220.9 543.3 220.3 549.1 219.1C554.9 217.8 557.4 214.9 559 214.1M549.1 225.3C549.9 228.6 551.4 239.4 554.1 245.1C556.8 250.9 563.4 257.6 565.2 260M573.9 250.1C578.1 248.5 588.4 243.1 598.8 240.2C609.1 237.3 629.8 234 636 232.7M425 185.6C427.5 186 434.5 188.1 439.9 188.1C445.3 188.1 449.4 185.6 457.3 185.6C465.1 185.6 479.6 187.2 487.1 188.1C494.5 188.9 499.5 190.1 502 190.5M482.1 240.2C484.2 237.7 490.8 228.2 494.5 225.3C498.2 222.4 502.8 223.2 504.4 222.8M434.9 235.2C437.4 233.6 446.5 229 449.8 225.3C453.1 221.6 454 214.9 454.8 212.9M484.6 250.1C488.3 250.5 500.3 253 506.9 252.6C513.5 252.2 517.3 252.2 524.3 247.6C531.3 243.1 545 229 549.1 225.3M425 171.9 L437.4 175.6M469.7 259 L482.1 245.1M3.8 309.9C7.3 311.1 18.4 313.6 24.9 317.3C31.3 321.1 35.6 327.5 42.2 332.2C48.9 337 59.2 339.5 64.6 345.9C70 352.3 70.8 365.3 74.5 370.7C78.2 376.1 82 375.3 86.9 378.1C91.9 381 101.4 386.4 104.3 388.1M77 283.8C79.5 284.2 88.6 284.9 91.9 286.3C95.2 287.8 92.3 291.3 96.8 292.5C101.4 293.8 110.1 289.8 119.2 293.8C128.3 297.7 141.5 310.7 151.5 316.1C161.4 321.5 172.6 323.5 178.8 326C185 328.5 182.5 330.2 188.7 331C194.9 331.8 211.4 331 216 331M77 283.8C77.4 288 77.8 300.4 79.5 308.6C81.1 316.9 86.1 323.5 86.9 333.5C87.7 343.4 84.8 362.4 84.4 368.2M151.5 316.1C151 319 150.2 327.7 149 333.5C147.7 339.3 144.8 340.9 144 350.8C143.3 360.8 144.4 386 144.5 393M188.7 264C186.6 266.4 182.1 272.7 176.3 278.9C170.5 285.1 158.1 295 153.9 301.2C149.8 307.4 151.9 313.6 151.5 316.1M188.7 331C187.9 333.5 185.8 342.6 183.7 345.9C181.7 349.2 182.9 349.9 176.3 350.8C169.7 351.8 149.4 351.3 144 351.3M188.7 331C190.3 328.9 194.1 323.1 198.6 318.6C203.2 314 213.1 306.2 216 303.7M158.9 352.1C162.2 354.8 171.7 363.9 178.8 368.2C185.8 372.6 197.4 376.5 201.1 378.1M215 288.8C220.4 289.6 239 292.1 247.3 293.8C255.5 295.4 256.4 299.5 264.6 298.7C272.9 297.9 291.5 290.4 296.9 288.8M249.8 291.3C250.2 294.2 251.4 300.4 252.2 308.6C253.1 316.9 253.5 331.4 254.7 340.9C256 350.4 258 358.7 259.7 365.7C261.3 372.8 263.8 380.2 264.6 383.1M296.9 288.8C301.1 290 312.2 295.4 321.7 296.2C331.3 297.1 342.8 295.4 354 293.8C365.2 292.1 383 287.5 388.8 286.3M354 293.8C357.3 295.4 368.1 301.2 373.9 303.7C379.7 306.2 380.1 307.4 388.8 308.6C397.4 309.9 419.8 310.7 426 311.1M329.2 321.1C329.6 324 334.1 334.3 331.7 338.4C329.2 342.6 317.2 344.6 314.3 345.9M344.1 316.1C347.4 314.9 356.5 312.4 363.9 308.6C371.4 304.9 384.6 296.2 388.8 293.8M388.8 286.3C392.1 289.6 402.4 300.4 408.6 306.2C414.8 312 423.1 318.6 426 321.1M361.5 333.5C363.9 332.6 369.7 331 376.3 328.5C383 326 392.9 320.6 401.2 318.6C409.4 316.5 421.9 316.5 426 316.1M339.1 358.3C343.3 358.7 355.7 361.6 363.9 360.8C372.2 359.9 378.4 352.9 388.8 353.3C399.1 353.7 419.8 361.6 426 363.3M282 354.6C282.6 356.8 285.3 363.5 285.7 368.2C286.2 373 284.7 380.6 284.5 383.1M363.9 340.9C365.6 342.6 369.7 348.8 373.9 350.8C378 352.9 386.3 352.9 388.8 353.3M215 301.2C217.5 301.6 224.1 305.3 229.9 303.7C235.7 302 246.4 293.3 249.8 291.3M264.6 259C267.1 261.5 274.2 268.9 279.5 273.9C284.9 278.9 294 286.3 296.9 288.8M314.3 259C315.5 261.9 316.8 271.8 321.7 276.4C326.7 280.9 338.7 283.4 344.1 286.3C349.5 289.2 352.4 292.5 354 293.8M354 259C355.7 261.5 358.1 269.3 363.9 273.9C369.7 278.4 384.6 284.2 388.8 286.3M373.9 259C376.3 261.1 383.8 270.2 388.8 271.4C393.7 272.7 397.4 266.9 403.7 266.4C409.9 266 422.3 268.5 426 268.9M388.8 308.6C389.6 312.8 393.7 326 393.7 333.5C393.7 340.9 389.6 350 388.8 353.3M403.7 306.2C404.1 309.9 405.3 319.8 406.1 328.5C407 337.2 407.4 347.7 408.6 358.3C409.9 368.9 412.8 386.4 413.6 392M376.3 328.5C376.8 330.6 379.2 337.2 378.8 340.9C378.4 344.6 374.7 349.2 373.9 350.8M215 392C219.1 390.6 231.5 384.6 239.8 383.1C248.1 381.6 257.2 383.1 264.6 383.1C272.1 383.1 279.5 382.9 284.5 383.1C289.5 383.3 292.8 384.1 294.4 384.4M309.3 392C311.8 389.7 319.3 383.8 324.2 378.1C329.2 372.5 336.6 361.6 339.1 358.3M363.9 360.8C365.6 363.7 369.7 372.9 373.9 378.1C378 383.4 386.3 389.7 388.8 392M252.2 308.6C256.4 308.6 269.6 309.5 277.1 308.6C284.5 307.8 289.5 305.7 296.9 303.7C304.4 301.6 317.6 297.5 321.7 296.2M388.8 353.3C389.6 356.2 393.7 364.2 393.7 370.7C393.7 377.2 389.6 388.5 388.8 392M215 358.3C218.3 356.6 229.9 350.8 234.9 348.4C239.8 345.9 243.1 344.2 244.8 343.4M259.7 365.7 L279.5 354.6M425 313.6C428.3 313.2 437.8 310.5 444.9 311.1C451.9 311.7 463.5 316.3 467.2 317.3M430 259C430.8 263.1 434.5 276.8 434.9 283.8C435.3 290.9 432.9 298.3 432.4 301.2M425 331C429.1 331.4 441.5 333.1 449.8 333.5C458.1 333.9 470.5 333.5 474.6 333.5M484.6 259C487.1 260.7 494.1 266.4 499.5 268.9C504.8 271.4 509.8 273.9 516.8 273.9C523.9 273.9 533.8 271.4 541.7 268.9C549.5 266.4 560.3 260.7 564 259M477.1 328.5C480.9 327.7 491.6 324.8 499.5 323.5C507.3 322.3 520.2 321.5 524.3 321.1M536.7 333.5C540.8 332.2 553.3 328.9 561.5 326C569.8 323.1 578.1 318.6 586.3 316.1C594.6 313.6 602.9 312.8 611.2 311.1C619.4 309.5 631.9 307 636 306.2M559 306.2C559.9 309.1 562.4 316.9 564 323.5C565.7 330.2 568.1 342.2 569 345.9M618.6 291.3C619.4 288.4 620.7 278 623.6 273.9C626.5 269.8 633.9 267.7 636 266.4M596.3 333.5 L598.8 353.3M511.9 363.3C512.3 366.6 513.1 378.1 514.4 383.1C515.6 388.1 518.5 391.4 519.3 393M529.3 368.2C532.6 369.5 543.3 373.2 549.1 375.7C554.9 378.1 561.5 381.9 564 383.1M425 365.7C427.5 366.6 435.8 367.8 439.9 370.7C444 373.6 448.2 381 449.8 383.1M484.6 338.4C488.3 339.7 501.5 343.4 506.9 345.9C512.3 348.4 515.2 352.1 516.8 353.3M425 291.3C428.3 292.1 438.2 296.2 444.9 296.2C451.5 296.2 461.4 292.1 464.7 291.3M439.9 259C441.5 261.1 446.5 267.9 449.8 271.4C453.1 274.9 458.1 278.7 459.8 280.1M449.8 259C454 261.5 467.2 269.8 474.6 273.9C482.1 278 488.3 280.1 494.5 283.8C500.7 287.5 509 294.2 511.9 296.2M444.9 296.2C445.7 299.1 449 307.4 449.8 313.6C450.7 319.8 451.5 326.8 449.8 333.5C448.2 340.1 444 349.2 439.9 353.3C435.8 357.5 427.5 357.5 425 358.3M425 345.9 L439.9 353.3M474.6 333.5 L484.6 338.4M499.5 303.7C500.3 305.7 504.4 312.8 504.4 316.1C504.4 319.4 500.3 322.3 499.5 323.5M569 345.9C571.5 345.1 579.3 343 583.9 340.9C588.4 338.8 594.2 334.7 596.3 333.5M529.3 296.2C534.2 297.9 551.6 304.9 559 306.2C566.5 307.4 571.5 304.1 573.9 303.7M425 385.6 L437.4 392M449.8 353.3C452.3 355 461.4 360.8 464.7 363.3C468 365.7 468.9 367.4 469.7 368.2M434.9 370.7 L439.9 392M477.1 373.2 L487.1 392M598.8 278.9 L618.6 291.3M72 390.8C70.4 393 64.2 399.2 62.1 404.4C60 409.6 61.3 415.6 59.6 421.8C58 428 53 434.2 52.2 441.6C51.3 449.1 52.2 460.3 54.6 466.5C57.1 472.7 62.9 475.4 67.1 478.9C71.2 482.4 80.3 484.3 79.5 487.6C78.6 490.9 65.6 492.3 62.1 498.7C58.6 505.2 59 521.5 58.4 526M79.5 487.6C83.6 483.6 98.1 470.8 104.3 464C110.5 457.2 111.7 451.2 116.7 446.6C121.7 442.1 125.8 441.2 134.1 436.7C142.4 432.1 156.4 423.9 166.3 419.3C176.3 414.8 185.4 413.1 193.7 409.4C201.9 405.7 212.3 399 216 397M146.5 390.8C148.6 392.6 153.5 398.4 158.9 401.9C164.3 405.4 175.4 410.2 178.8 411.9M216 491.3C213.1 492.1 203.2 493.4 198.6 496.3C194.1 499.2 192 505.4 188.7 508.7C185.4 512 182.5 513.2 178.8 516.1C175 519 168.4 524.4 166.3 526M406.1 399.4C405.3 403.6 402.8 415.2 401.2 424.3C399.5 433.4 397.9 443.7 396.2 454.1C394.6 464.4 392.1 480.9 391.2 486.3M373.9 392C370.6 394.9 359.4 405.2 354 409.4C348.6 413.5 343.7 415.6 341.6 416.8M349 416.8C349.9 418.5 351.5 424.7 354 426.8C356.5 428.8 358.1 429.6 363.9 429.2C369.7 428.8 384.6 425.1 388.8 424.3M398.7 429.2 L413.6 436.7M215 486.3C219.1 487.6 231.5 492.9 239.8 493.8C248.1 494.6 258.4 493.4 264.6 491.3C270.9 489.2 272.1 485.5 277.1 481.4C282 477.2 291.5 469 294.4 466.5M294.4 466.5C297.7 467.3 306.8 469.8 314.3 471.4C321.7 473.1 335 475.6 339.1 476.4M222.4 441.6C225.3 443.3 236.1 448.7 239.8 451.6C243.5 454.5 244 457.8 244.8 459M257.2 465.2 L294.4 466.5M368.9 481.4C370.6 480.5 375.5 475.4 378.8 476.4C382.1 477.4 387.1 485.7 388.8 487.6M398.7 483.8 L426 485.1M215 401.9 L220 411.9M249.8 392 L252.2 404.4M274.6 392 L284.5 401.9M339.1 454.1C340.8 456.1 346.6 463.2 349 466.5C351.5 469.8 353.2 472.7 354 473.9M314.3 511.1C317.2 511.6 326.7 513.6 331.7 513.6C336.6 513.6 342 511.6 344.1 511.1M442.4 390.8C442.6 395.1 443.6 408.3 443.6 416.8C443.6 425.3 442.2 433.4 442.4 441.6C442.6 449.9 444.4 455.3 444.9 466.5C445.3 477.6 444.9 501.6 444.9 508.7M425 439.2C427.9 439.4 435.3 441.6 442.4 440.4C449.4 439.2 461.8 434.4 467.2 431.7C472.6 429 473.4 425.5 474.6 424.3M569 392C571.5 394.1 578.9 401.1 583.9 404.4C588.8 407.7 592.6 409.8 598.8 411.9C605 413.9 617.4 416 621.1 416.8M549.1 454.1C551.6 456.5 558.2 465.6 564 469C569.8 472.3 578.1 471 583.9 473.9C589.7 476.8 594.4 483 598.8 486.3C603.1 489.6 608.1 492.5 609.9 493.8M425 483.8C426.2 485.1 429.1 489.6 432.4 491.3C435.8 492.9 439.9 495 444.9 493.8C449.8 492.5 457.7 487.2 462.2 483.8C466.8 480.5 470.5 475.6 472.2 473.9M509.4 392C509 394.1 508.6 399 506.9 404.4C505.3 409.8 500.7 421 499.5 424.3M454.8 392 L462.2 409.4M519.3 429.2C521.8 428.4 529.3 426.3 534.2 424.3C539.2 422.2 546.6 418.1 549.1 416.8M609.9 493.8 L637.2 495M425 424.3C427.5 425.1 437 426.3 439.9 429.2C442.8 432.1 442 439.6 442.4 441.6"/>
<path fill="none" stroke="#f8c47c" stroke-width="1.5" stroke-linecap="round" stroke-linejoin="round" d="M432.4 323.9C434.8 324.3 442.1 326.4 447 326.3C451.8 326.2 456.6 323.9 461.5 323.4C466.3 323 473.6 323.5 476 323.5M431.3 328.1C433.5 329 440.4 331 444.5 333.3C448.5 335.5 451.7 339.2 455.5 341.7C459.4 344.2 465.7 347.3 467.7 348.4M428.2 332.7C429.5 334.3 433.8 339.1 435.7 342.7C437.7 346.2 438.5 350.3 439.9 354.1C441.3 357.9 443.4 363.6 444.1 365.5M423.5 333.5C423.2 335.5 421.5 341.3 421.7 345.3C422 349.2 425 353.3 425 357.3C425 361.2 422.2 367 421.7 369M414.7 331.4C413 332.5 407.7 335.9 404.4 338.4C401.1 340.8 398 343.5 394.8 346.2C391.7 348.9 387.2 353 385.6 354.4M421.4 324.9C418.9 325.7 411 327.7 406.1 329.8C401.1 331.9 396.8 335.8 391.7 337.5C386.6 339.3 378.2 339.7 375.5 340.2M419 323.1C416.4 323.1 408.2 323.9 403.1 323C398 322.1 393.4 319 388.4 317.6C383.4 316.2 375.7 315.1 373.2 314.6M416.4 316.7C414.9 315.2 410.4 310.8 407.5 307.8C404.6 304.8 402.1 301.5 399 298.6C396 295.7 391 291.8 389.4 290.4M422.6 315.9C422.3 313.9 421.3 307.8 420.4 303.8C419.5 299.8 417.9 295.8 417.3 291.8C416.7 287.7 416.7 281.5 416.6 279.5M430.7 314.4C432.2 313 436.8 309 439.3 305.9C441.7 302.8 443.4 299.2 445.4 295.8C447.3 292.5 450.1 287.3 451.1 285.6M428.1 321.5C430.1 320 436.1 315.6 440.1 312.6C444.2 309.7 447.8 306.2 452.2 303.7C456.6 301.3 464.1 299 466.5 298M435.9 333.9C435.2 334.8 433.7 338.6 431.7 339.3C429.8 340 426.8 338.1 424.3 338.2C421.8 338.4 419 340.5 416.7 340.1C414.4 339.8 411.5 337.9 410.6 336.1C409.7 334.2 411.5 330.8 411.1 328.9C410.8 326.9 409.6 326.1 408.7 324.3C407.7 322.4 405.1 319.5 405.6 317.8C406.2 316 410.1 315.4 411.8 313.8C413.5 312.2 413.9 308.7 415.9 308C417.9 307.3 421.5 309 423.7 309.7C425.9 310.4 427.2 311.8 429.3 312.3C431.4 312.8 434.5 311.9 436.5 312.8C438.5 313.7 440.8 315.6 441.3 317.5C441.9 319.3 440.3 321.9 439.7 323.7C439.1 325.6 438.2 326.9 437.6 328.6C436.9 330.3 436.2 333 435.9 333.9M443.3 348.1C441.1 348.3 434.5 348.9 430.3 349.2C426.2 349.6 422.3 350.7 418.6 350.1C414.8 349.5 411 347.6 407.9 345.7C404.8 343.7 402.6 341.1 399.8 338.6C396.9 336 391.6 333.5 390.7 330.3C389.8 327.1 393.3 322.9 394.3 319.4C395.2 315.8 394.6 311.7 396.6 308.7C398.5 305.7 402.3 303 405.8 301.3C409.3 299.6 413.5 299.4 417.6 298.4C421.6 297.4 426.2 294.7 430 295.3C433.8 296 436.7 300.2 440.2 302.2C443.7 304.3 449.1 304.9 451.2 307.6C453.4 310.4 452.5 315 453.2 318.5C453.8 322.1 455.8 325.6 455.2 328.9C454.6 332.2 451.6 335.1 449.6 338.2C447.6 341.4 444.4 346.4 443.3 348.1M450 356.9C447.2 357.5 438.6 359.3 432.8 360.4C427.1 361.5 420.7 364.6 415.4 363.6C410.1 362.7 405.4 357.8 400.8 354.7C396.3 351.7 391.8 349 388.1 345.3C384.4 341.5 380 337 378.6 332.3C377.2 327.5 377.9 321.5 379.7 316.8C381.4 312.1 386.1 308.7 389.1 304.3C392 299.8 393 292.9 397.3 290.2C401.7 287.5 409.5 288.5 415.3 288.1C421 287.7 426.2 287.2 431.9 287.7C437.5 288.1 444.5 288.2 449.1 290.7C453.7 293.3 456.8 298.7 459.6 302.9C462.4 307.2 465.1 311.7 466 316.4C466.9 321 466 326.1 464.8 330.6C463.6 335.2 461.3 339.3 458.9 343.7C456.4 348.1 451.5 354.7 450 356.9M425.5 354C426.5 349 436.7 331.7 431.3 323.7C426 315.8 399.8 309.3 393.5 306.5M397 312.2C402.6 315 421.2 328 430.5 329.1C439.9 330.2 449.2 320.5 453 318.7M424.1 361.5C423.3 356.4 427 338.9 419.1 331.2C411.3 323.5 384.1 317.8 377.1 315.1M450.5 303.1C444.8 307.8 420.5 323.8 416.6 331.4C412.7 339 425.3 345.6 427 348.5M417.5 215.7C416.8 214.1 414.6 209.5 413.3 206.4C412.1 203.2 410.7 200 410.1 196.7C409.5 193.4 409.8 188.2 409.7 186.5M353 336.1C352.5 335 350.9 332 350.1 329.8C349.3 327.7 348.9 325.4 348.2 323.2C347.5 321 346.2 317.7 345.8 316.6M477.5 273.2C478.9 271.5 482.9 266.2 485.8 263C488.7 259.7 492.3 256.9 494.9 253.4C497.5 249.9 500.2 243.8 501.2 241.9M465.9 286.1C467.8 287.7 473.1 292.8 477.2 295.5C481.3 298.1 485.8 300.1 490.3 302C494.8 303.8 501.9 305.9 504.2 306.7M481.9 274.7C484.1 275.6 491.4 277.8 495.5 280.3C499.6 282.8 502.8 286.9 506.6 289.9C510.4 293 516.5 297.2 518.5 298.6M370 351.6C369.3 350.3 367.3 346.3 366.1 343.5C364.8 340.8 363.7 338 362.6 335.2C361.6 332.4 360.2 328.1 359.7 326.7M547 370.8C546.3 372.3 543.9 376.9 542.3 380C540.7 383 539.4 386.3 537.7 389.2C535.9 392.2 532.8 396.3 531.8 397.7M489.6 315.1C491.2 315.1 495.8 315.3 498.9 315.5C501.9 315.7 505 316.1 508 316.2C511.1 316.4 515.7 316.4 517.3 316.4M478.1 251.6C479.2 250.9 482.6 249.1 484.6 247.6C486.6 246 488.2 243.9 490.2 242.3C492.1 240.7 495.5 238.8 496.5 238.1M571.3 275.5C572.5 277.5 576 283.6 578.4 287.6C580.8 291.6 583.5 295.5 585.8 299.5C588.2 303.6 591.4 309.8 592.5 311.9M328.5 414.9C326.1 414.5 319 413 314.2 412.4C309.4 411.8 304.5 412 299.7 411.5C294.9 411 287.7 409.8 285.3 409.5M340.2 438.1C340.6 440.1 342.4 446 342.8 450C343.3 454 343 458.1 342.9 462.2C342.7 466.2 342 472.3 341.9 474.3M374.5 433.3C373.7 433.9 371.2 435.9 369.5 437.2C367.7 438.5 366 439.7 364.3 441.1C362.6 442.4 360.2 444.5 359.4 445.2M353.1 283C353.5 281.4 354.3 276.5 355.6 273.5C356.8 270.5 359.5 268.1 360.7 265.1C361.9 262.1 362.4 257.2 362.8 255.6M483.1 241.8C484.7 242.8 489.6 245.5 492.3 247.9C495.1 250.3 497 253.6 499.5 256.3C502 259.1 505.9 263 507.2 264.3M369.4 372.3C368.3 373.2 365 376.1 362.4 377.4C359.9 378.6 356.9 379.3 354.1 379.7C351.3 380.1 346.9 379.9 345.4 380M268.4 364.4C266.9 364.3 262.5 364 259.5 363.8C256.6 363.7 253.6 364 250.7 363.5C247.8 362.9 243.7 361.1 242.3 360.6M455.6 267.9C456.2 266 458.3 260.6 459.4 256.9C460.4 253.1 461.6 249.3 461.8 245.5C462.1 241.7 461.1 235.8 461 233.9M441.8 248.7C441.6 246.6 440.7 240 440.6 235.7C440.5 231.4 440.8 227 441.2 222.6C441.7 218.3 443 211.9 443.3 209.7M332.5 415.4C332.1 414.1 330.6 410.1 329.9 407.4C329.2 404.7 328.5 401.9 328.5 399.2C328.5 396.4 329.5 392.3 329.7 390.9M465.6 398.7C466.8 400.5 470.1 406.2 472.8 409.5C475.4 412.9 478.4 416.1 481.6 419.1C484.7 422 490 425.9 491.7 427.2M371.9 237.6C373.7 236.8 379 234.1 382.8 232.9C386.5 231.8 390.6 231.8 394.4 230.9C398.2 230 403.8 228.2 405.7 227.6M525.7 230.4C528.1 230.1 535.3 229.2 540.2 228.7C545 228.1 550 228.3 554.7 227.2C559.4 226.2 566.2 223.3 568.5 222.5M560.6 275C561.7 275 565.1 275.1 567.3 275C569.6 274.9 571.8 274.6 574 274.6C576.3 274.5 579.6 274.7 580.7 274.7M266.5 309.9C265 308.8 260.8 305.3 257.7 303.3C254.6 301.4 250.8 300.4 248 298.2C245.1 296 241.8 291.5 240.6 290.1M354.7 287.9C353.5 287.4 349.7 286.1 347.3 285C344.8 284 342.6 282.3 340.1 281.5C337.6 280.8 333.5 280.6 332.2 280.5M440.3 417.8C439.9 418.8 438.4 422 437.5 424.2C436.6 426.3 435.7 428.5 434.8 430.6C433.8 432.7 432.3 435.9 431.8 437M362.3 396.2C362.2 397.5 361.5 401.4 361.3 404C361.1 406.6 361 409.2 361 411.8C361 414.5 361.4 418.4 361.5 419.7M522.7 215.3C524.4 214.5 529.2 211.9 532.5 210.4C535.8 208.8 539.2 207.5 542.4 205.8C545.6 204 550.1 200.9 551.6 199.9M332.9 317.7C331.8 318.7 328.2 321.6 325.9 323.7C323.7 325.7 321.6 328 319.4 330C317.1 332.1 313.6 335.1 312.5 336.1M309.7 344.5C310 342.6 310.4 337 311.6 333.6C312.8 330.1 315 327 316.9 323.8C318.8 320.7 321.9 316.1 322.9 314.6M500.2 271.9C501.6 271.3 505.6 269.3 508.3 268C511 266.8 513.8 265.8 516.4 264.4C519.1 263 522.8 260.5 524.1 259.8M284.1 272.4C283.1 271.6 279.5 269.6 277.6 267.7C275.7 265.9 274.6 263.3 272.9 261.2C271.3 259.1 268.6 256.1 267.7 255.1M561.9 252.3C563 250.5 566.6 245.3 568.5 241.5C570.3 237.7 572.2 233.8 573.1 229.7C573.9 225.6 573.4 219.1 573.5 217M367.7 452.7C366.7 452.4 363.6 451.9 361.7 451.1C359.8 450.2 358.3 448.6 356.5 447.7C354.7 446.7 351.8 445.6 350.8 445.2M466.3 366.2C467.6 367.5 471.8 371.1 473.8 374C475.8 376.9 477.3 380.4 478.6 383.7C479.8 387.1 480.9 392.4 481.4 394.1M414.4 398C413.1 397.6 408.7 397.1 406.1 395.9C403.5 394.8 401.3 392.8 399 391.2C396.6 389.6 393 387.2 391.9 386.4M534.3 235.3C534.7 234.2 535.9 230.8 536.9 228.7C538 226.5 539.2 224.5 540.5 222.5C541.8 220.5 543.9 217.6 544.6 216.6M559 343.7C558.7 345.8 557.1 352.1 557.1 356.3C557.2 360.4 558.3 364.7 559.4 368.8C560.5 372.8 563 378.7 563.7 380.7M517.6 277.3C518.6 276 521.6 272.1 523.8 269.6C525.9 267.1 528.1 264.6 530.4 262.3C532.8 260 536.8 257 538 256M329 212.7C328.8 210.7 327.6 204.6 327.8 200.6C328 196.6 329.3 192.7 330 188.7C330.7 184.7 331.6 178.7 331.9 176.7M377.8 437.9C377.3 439.5 376.1 444.3 374.8 447.3C373.5 450.3 372 453.4 370.1 456C368.1 458.6 364.2 461.8 363.1 463M349.3 332.8C346.9 333.5 339.8 335.4 335.1 336.8C330.4 338.3 325.8 340.1 321.1 341.6C316.4 343.1 309.4 345.2 307 345.9M416.9 267.7C419 268.1 425.4 270.1 429.7 270.3C434 270.4 438.4 268.8 442.7 268.5C447.1 268.3 453.7 268.7 455.9 268.8M586.8 322.5C589 322.4 595.8 321.6 600.3 321.5C604.8 321.4 609.5 321 613.9 321.8C618.3 322.6 624.5 325.6 626.7 326.3M513.5 411.2C512.4 412.5 508.7 415.9 506.7 418.5C504.8 421.2 503.7 424.5 501.7 427.1C499.8 429.8 496.1 433.3 495 434.5M439.5 380.8C440.9 381.4 445.1 383.7 448.2 384.5C451.2 385.2 454.4 385 457.5 385.4C460.6 385.7 465.3 386.5 466.8 386.7M523.7 241.5C524.6 242.2 527.4 244.3 529.2 245.6C531 247 532.8 248.4 534.7 249.7C536.6 250.9 539.6 252.6 540.6 253.1M535 267.1C535.4 268.3 536.6 271.8 537.4 274.1C538.1 276.4 539.3 278.7 539.7 281.1C540.1 283.5 539.9 287.2 539.9 288.4M338.1 253.5C339 252.5 341.8 249.6 343.5 247.5C345.1 245.3 346.1 242.7 347.9 240.7C349.7 238.7 353.3 236.5 354.4 235.7M518.8 229.3C520.1 229.1 523.8 228.4 526.3 228.1C528.9 227.8 531.5 228.1 533.9 227.6C536.4 227.1 539.9 225.5 541.1 225M533.5 385C535 385.8 539.4 388.3 542.3 389.8C545.3 391.4 548.6 392.5 551.3 394.4C554 396.4 557.2 400.4 558.4 401.6M353.6 312.1C352.6 312.5 349.5 313.8 347.4 314.1C345.3 314.5 343.1 314.3 340.9 314.1C338.8 314 335.6 313.5 334.5 313.3M486.5 372.2C486.7 373.4 487.2 377 487.7 379.4C488.2 381.8 488.7 384.1 489.6 386.4C490.4 388.7 492.2 391.9 492.7 392.9M352 270C353.4 269.3 357.5 267 360.2 265.3C362.8 263.7 365.4 261.9 367.8 259.9C370.2 257.9 373.5 254.4 374.6 253.4M546.7 297.7C547.1 299.5 548.4 305.1 548.8 308.8C549.2 312.6 548.8 316.4 548.9 320.1C549.1 323.9 549.8 329.6 549.9 331.4M493.1 336.6C492.5 338.3 491 343.3 489.7 346.5C488.4 349.7 486.6 352.7 485.2 355.9C483.9 359.1 482.4 364 481.8 365.7M391.2 410.2C391 411.7 390 416.1 389.9 419.1C389.8 422 390.5 425 390.5 427.9C390.6 430.9 390.3 435.4 390.2 436.9M470.2 281C471.2 280 474.4 277.3 476.1 275.1C477.8 273 479.1 270.5 480.4 268C481.6 265.6 483 261.7 483.6 260.4M339.5 332.3C337.5 333 331.1 334.5 327.4 336.5C323.7 338.5 320.1 341.1 317.2 344.1C314.3 347.2 311.3 353 310.1 354.7M486.9 248C488.9 248.5 494.8 249.7 498.6 250.9C502.4 252.1 506.2 253.5 509.8 255.2C513.4 256.9 518.5 260.3 520.2 261.3M447.5 387.8C447.8 389.8 449.5 395.6 449.6 399.5C449.8 403.5 449.1 407.5 448.4 411.4C447.6 415.3 445.9 421 445.4 422.9M476.7 428.2C474.7 429 468.7 430.9 465 432.9C461.4 435 458 437.6 454.8 440.3C451.7 443.1 447.5 447.9 446.1 449.4M545.7 282.8C546.7 280.5 550.4 273.9 551.6 269.2C552.8 264.5 552.1 259.3 553.1 254.5C554.1 249.7 556.7 242.7 557.4 240.4M523.3 348.9C525.5 349.2 532.4 349.4 536.7 350.6C541 351.9 545 354.1 549 356.4C552.9 358.6 558.3 362.6 560.2 363.9M452 254.4C452.4 253.4 454 250.6 454.6 248.5C455.1 246.4 455.1 244.2 455.2 242.1C455.4 239.9 455.4 236.7 455.4 235.6M421.7 381.6C420.5 383.2 417.3 388.3 414.5 390.9C411.6 393.5 407.7 395 404.7 397.5C401.7 400 397.9 404.5 396.6 406M339.5 235.1C340.2 234.3 342.8 232.1 344.2 230.3C345.5 228.5 346.3 226.3 347.4 224.3C348.5 222.4 350.2 219.5 350.8 218.5M296.2 245.6C297.1 244.2 300 240.1 301.8 237.3C303.5 234.5 304.9 231.4 306.9 228.8C308.8 226.1 312.4 222.6 313.5 221.3M501.3 397.6C502.1 398.9 504.6 402.5 505.7 405.2C506.9 407.9 507.2 410.9 508.3 413.6C509.4 416.3 511.7 420 512.4 421.3"/>
<path fill="none" stroke="#f59a7d" stroke-width="1.9" stroke-linecap="round" stroke-linejoin="round" d="M363.9 211.6C365.6 210.2 371.4 206.1 373.9 203C376.3 199.8 378 194.7 378.8 193M559 214.1C562.4 212.7 572.3 208.5 578.9 205.4C585.5 202.3 592.1 199.2 598.8 195.5C605.4 191.8 612.4 186.8 618.6 183.1C624.8 179.4 633.1 174.8 636 173.2M546.6 136.4 L566.5 134.7M425 131C426 133.9 429.3 143 431.2 148.3C433.1 153.7 435.3 160.8 436.2 163.2M3.8 389.8C8.1 389.3 19.3 387.1 29.8 386.8C40.4 386.6 56.7 387 67.1 388.3C77.4 389.6 84.8 393.7 91.9 394.5C98.9 395.3 103 393.8 109.3 393C115.5 392.3 121.7 390.6 129.1 389.8C136.6 389 145.7 388 153.9 388.1C162.2 388.2 170.5 389.4 178.8 390.6C187 391.7 195.3 393.8 203.6 395C211.9 396.3 222.4 397.7 228.4 398C234.4 398.3 237.9 397.2 239.8 397M336.6 360.8C335.8 363.3 332.7 370.3 331.7 375.7C330.6 381 330.6 390.1 330.4 393M198.6 406.9C199.4 405.7 200.9 401.5 203.6 399.4C206.3 397.4 213.1 395.3 215 394.5M239.8 397C244 397.6 256.8 399.4 264.6 400.7C272.5 401.9 281.6 403 287 404.4C292.4 405.9 295.3 408.5 296.9 409.4M334.1 390.8C334.6 393.4 335.8 402.5 336.6 406.9C337.5 411.2 338.3 413.1 339.1 416.8C339.9 420.5 342 424.7 341.6 429.2C341.2 433.8 339.5 441 336.6 444.1C333.7 447.2 328.8 445.8 324.2 447.9C319.7 449.9 314.3 453.4 309.3 456.5C304.4 459.6 296.5 462.7 294.4 466.5C292.4 470.2 294.4 475.2 296.9 478.9C299.4 482.6 306.4 484.7 309.3 488.8C312.2 492.9 313.5 497.5 314.3 503.7C315.1 509.9 314.3 522.3 314.3 526M621.1 390.8C621.5 393.4 623.6 402.1 623.6 406.9C623.6 411.7 621.1 413.5 621.1 419.3C621.1 425.1 624 435 623.6 441.6C623.2 448.3 620.9 454.1 618.6 459C616.3 464 611.6 466.1 609.9 471.4C608.3 476.8 608.7 486.1 608.7 491.3C608.7 496.5 609.7 500.6 609.9 502.5M621.1 416.8 L637.2 422.3M499.5 397C500.7 398.6 503.6 401.5 506.9 406.9C510.2 412.3 517.3 425.5 519.3 429.2M495.7 476.4C496 479.7 497.2 490.9 497 496.3C496.8 501.6 494.9 506.6 494.5 508.7"/>
<path fill="none" stroke="#e7738d" stroke-width="1.9" stroke-linecap="round" stroke-linejoin="round" d="M3.8 206.7C9.3 206.5 28.8 205.6 37.3 205.9C45.8 206.2 48 209.3 54.6 208.4C61.3 207.5 68.3 201.8 77 200.5C85.7 199.1 99.7 199.6 106.8 200.5C113.8 201.4 113.8 201 119.2 205.9C124.6 210.9 133.3 224.5 139 230.3C144.8 236 148.1 236.5 153.9 240.2C159.7 243.9 168.6 249.3 173.8 252.6C179 255.9 183.1 258.8 185 260M239.8 124.8C244 126.6 256.8 130.8 264.6 135.9C272.5 141.1 280 149.8 287 155.8C294 161.8 301.5 168 306.8 171.9C312.2 175.9 313 175.9 319.3 179.4C325.5 182.9 336.6 188.3 344.1 193C351.5 197.8 358.4 203.6 363.9 207.9C369.5 212.3 375.3 217.2 377.6 219.1M314.3 124.8C316.4 127.9 322.6 138.6 326.7 143.4C330.8 148.1 335 150.8 339.1 153.3C343.3 155.8 349 155.4 351.5 158.3C354 161.2 354.2 166.1 354 170.7C353.8 175.2 350.9 183.1 350.3 185.6M336.6 253.8C339.5 252 347.8 245.4 354 242.7C360.2 240 367.2 238.9 373.9 237.7C380.5 236.5 388.8 234.7 393.7 235.2C398.7 235.7 398.3 238.2 403.7 240.7C409 243.2 422.3 248.5 426 250.1M377.6 219.1C377.8 220.5 376.1 225.1 378.8 227.8C381.5 230.5 391.2 234 393.7 235.2M511.9 193C514.8 193.4 523 193.4 529.3 195.5C535.5 197.6 544.1 202.3 549.1 205.4C554.1 208.5 557.4 212.7 559 214.1M516.8 207.9C517.5 210.8 519.3 219.9 520.6 225.3C521.8 230.7 523.6 234.4 524.3 240.2C525 246 524.7 256.7 524.8 260M598.8 198C602.1 199.6 613.2 204.2 618.6 207.9C624 211.6 628.8 214.9 631 220.3C633.3 225.7 631.8 233.6 632.3 240.2C632.8 246.8 633.7 256.7 634 260M423.8 252.6C428.1 253 441.3 255.9 449.8 255.1C458.3 254.3 468.9 248.5 474.6 247.6C480.4 246.8 482.7 248 484.6 250.1C486.4 252.2 485.6 258.4 485.8 260M176.8 257.8C177.1 262.1 176.8 276.2 178.8 283.8C180.7 291.5 184.6 297.9 188.7 303.7C192.8 309.5 199 314.5 203.6 318.6C208.1 322.6 213.9 326.4 216 328M178.8 257.8C182.1 258.8 192.4 261.5 198.6 264C204.8 266.4 213.1 271.2 216 272.7M213.8 271.9C218.1 270.8 231.1 267.6 239.8 265.2C248.5 262.8 261.5 259 265.9 257.8M213.8 326C216.4 327.7 224.7 333.1 229.9 336C235.1 338.8 239 341.7 244.8 343.4C250.6 345.1 258.4 344 264.6 345.9C270.9 347.7 279.5 353.1 282.5 354.6M244.8 343.4 L213.8 376.2M296.9 288.8C295.7 292.1 291.1 302 289.5 308.6C287.8 315.3 288.2 323.1 287 328.5C285.7 333.9 283.3 336.6 282 340.9C280.8 345.3 278.7 350 279.5 354.6C280.4 359.1 284.4 363.3 287 368.2C289.6 373.2 293.6 381.7 294.9 384.4M331.7 340.9C333.3 340.1 337 336.6 341.6 336C346.1 335.3 356.1 337 359 337.2M334.1 257.8C333.7 260 333.7 268.2 331.7 271.4C329.6 274.6 323.4 276 321.7 276.9M516.8 268.9C517.1 272.2 516.8 282.2 518.1 288.8C519.3 295.4 522 301.6 524.3 308.6C526.6 315.7 529.7 323.5 531.7 331C533.8 338.4 535.9 349.6 536.7 353.3M474.6 316.1C478 314 488.3 307 494.5 303.7C500.7 300.4 506.1 297.5 511.9 296.2C517.7 295 526.4 296.2 529.3 296.2M469.7 368.2C472.6 368.4 482.1 368.8 487.1 369.5C492 370.1 495.3 373 499.5 371.9C503.6 370.9 506.9 365.7 511.9 363.3C516.8 360.8 523 357.7 529.3 357C535.5 356.4 543.9 359.7 549.1 359.5C554.3 359.3 558.4 356.4 560.3 355.8M569 349.6C571.9 349.8 579.3 350 586.3 350.8C593.4 351.7 605 353.5 611.2 354.6C617.4 355.6 619.2 356.8 623.6 357C627.9 357.3 635 356 637.2 355.8M623.6 358.3C624.8 360.4 628.8 366.6 631 370.7C633.3 374.8 636.2 381 637.2 383.1M499.5 371.9 L504.9 393M485.8 257.8C488.1 258.8 494.3 262.1 499.5 264C504.6 265.8 513.9 268.1 516.8 268.9M516.8 268.9 L524.3 257.8M296.9 409.4C299.8 409.8 308.1 411 314.3 411.9C320.5 412.7 328.4 413.5 334.1 414.3C339.9 415.2 346.6 416.4 349 416.8M426 429.2C423.9 431.3 417.3 436.7 413.6 441.6C409.9 446.6 407.8 452.8 403.7 459C399.5 465.2 392.1 473.5 388.8 478.9C385.4 484.3 385 486.7 383.8 491.3C382.6 495.8 381.3 500.4 381.3 506.2C381.3 512 383.4 522.7 383.8 526M339.1 476.4C341.6 476 349 473.1 354 473.9C359 474.7 363.1 479.1 368.9 481.4C374.7 483.6 383.8 486.3 388.8 487.6C393.7 488.8 397 488.6 398.7 488.8M398.7 488.8C400.8 491.3 406.5 499.2 411.1 503.7C415.7 508.3 423.5 514 426 516.1M359 488.8C358.6 490.5 360.6 495 356.5 498.7C352.4 502.5 340.4 506.8 334.1 511.1C327.9 515.5 321.7 522.5 319.3 524.8M289.5 390.8 L287 404.4M423.8 416.8C425.2 420.1 429.8 430.9 432.4 436.7C435.1 442.5 438.2 446.6 439.9 451.6C441.5 456.5 442 464 442.4 466.5M449.8 419.3C454 418.7 466.8 416.2 474.6 415.6C482.5 415 492.8 414.1 497 415.6C501.1 417 495.7 422 499.5 424.3C503.2 426.5 513.5 427.8 519.3 429.2C525.1 430.7 531.7 432.3 534.2 433M494.5 390.8C494.7 393 495.3 400.3 495.7 404.4C496.2 408.5 496.8 413.7 497 415.6M420.8 377.1C421.2 379.6 422.5 387.9 423 392C423.5 396.1 423 397.8 423.8 401.9C424.5 406.1 426.9 414.3 427.5 416.8"/>
<path fill="none" stroke="#e7738d" stroke-width="2.3" stroke-linecap="round" stroke-linejoin="round" d="M569 124.8C568.8 126.6 569.4 130.8 567.7 135.9C566.1 141.1 562.1 149.2 559 155.8C555.9 162.4 553.3 169.9 549.1 175.6C545 181.4 539.2 185.2 534.2 190.5C529.3 195.9 525.1 202.5 519.3 207.9C513.5 213.3 506.9 218.3 499.5 222.8C492 227.4 482.9 231.9 474.6 235.2C466.4 238.5 458.3 240 449.8 242.7C441.3 245.4 428.1 249.9 423.8 251.4"/>
<path fill="none" stroke="#ee8a80" stroke-width="1.9" stroke-linecap="round" stroke-linejoin="round" stroke-dasharray="4 2" d="M608.7 153.3C611.2 154.1 619 156.4 623.6 158.3C628.1 160.1 633.9 163.4 636 164.5M388.8 293.8C386.3 296.2 378.4 302.9 373.9 308.6C369.3 314.4 363.9 323.7 361.5 328.5C359 333.3 359.4 335.7 359 337.2M388.8 293.8C392.1 292.5 402.4 288.8 408.6 286.3C414.8 283.8 423.1 280.1 426 278.9M359 337.2C360.6 339.1 363.9 344.8 368.9 348.4C373.9 351.9 382.1 355.8 388.8 358.3C395.4 360.8 402.4 362 408.6 363.3C414.8 364.5 423.1 365.3 426 365.7M423.8 277.6C428.1 277.7 443.8 277.9 449.8 278.4C455.8 278.8 457.3 277.9 459.8 280.1C462.2 282.3 462.6 286.5 464.7 291.3C466.8 296 470.3 302.4 472.2 308.6C474 314.9 475.5 322.3 475.9 328.5C476.3 334.7 476.1 340.9 474.6 345.9C473.2 350.8 471.7 355 467.2 358.3C462.6 361.6 452.7 363.7 447.3 365.7C442 367.8 437 369.9 434.9 370.7"/>
<g font-family="'DejaVu Sans','Liberation Sans',sans-serif" opacity="0.999" fill="#282828" stroke="#282828" stroke-width="0.35" filter="url(#halo)">
<text x="37.3" y="216.6" font-size="11" textLength="64" lengthAdjust="spacingAndGlyphs">Aubergenville</text>
<text x="128.4" y="188" font-size="11" textLength="57.8" lengthAdjust="spacingAndGlyphs">Verneuil-sur-</text>
<text x="144" y="200.2" font-size="11" textLength="24.8" lengthAdjust="spacingAndGlyphs">Seine</text>
<text x="212.3" y="144.4" font-size="11" textLength="54.6" lengthAdjust="spacingAndGlyphs">Éragny-sur-</text>
<text x="230.4" y="156.8" font-size="11" textLength="21.3" lengthAdjust="spacingAndGlyphs">Oise</text>
<text x="205.6" y="172.4" font-size="11" textLength="76" lengthAdjust="spacingAndGlyphs">Conflans-Sainte-</text>
<text x="221.7" y="184.1" font-size="11" textLength="43.7" lengthAdjust="spacingAndGlyphs">Honorine</text>
<text x="319.3" y="141.9" font-size="11" textLength="36" lengthAdjust="spacingAndGlyphs">Taverny</text>
<text x="394.2" y="139.4" font-size="11" textLength="39.2" lengthAdjust="spacingAndGlyphs">Domont</text>
<text x="312.3" y="180.4" font-size="11" textLength="54.1" lengthAdjust="spacingAndGlyphs">Franconville-</text>
<text x="316.8" y="193" font-size="11" textLength="47.2" lengthAdjust="spacingAndGlyphs">la-Garenne</text>
<text x="206.6" y="215.1" font-size="11" textLength="36.7" lengthAdjust="spacingAndGlyphs">Achères</text>
<text x="323.7" y="230.4" font-size="14.5" textLength="63" lengthAdjust="spacingAndGlyphs">Argenteuil</text>
<text x="400.7" y="243.6" font-size="14.5" textLength="70" lengthAdjust="spacingAndGlyphs">Saint-Denis</text>
<text x="336.6" y="257.1" font-size="11" textLength="46.2" lengthAdjust="spacingAndGlyphs">Colombes</text>
<text x="191.7" y="251.6" font-size="11" textLength="29.3" lengthAdjust="spacingAndGlyphs">Poissy</text>
<text x="488.5" y="135.7" font-size="11" textLength="61.1" lengthAdjust="spacingAndGlyphs">Goussainville</text>
<text x="430.5" y="175.6" font-size="11" textLength="41.2" lengthAdjust="spacingAndGlyphs">Sarcelles</text>
<text x="439.1" y="198" font-size="11" textLength="50.9" lengthAdjust="spacingAndGlyphs">Garges-lès-</text>
<text x="444.9" y="210.4" font-size="11" textLength="40.2" lengthAdjust="spacingAndGlyphs">Gonesse</text>
<text x="558.5" y="187.3" font-size="11" textLength="45.7" lengthAdjust="spacingAndGlyphs">Tremblay-</text>
<text x="558.5" y="199.7" font-size="11" textLength="45.7" lengthAdjust="spacingAndGlyphs">en-France</text>
<text x="508.2" y="238.2" font-size="11" textLength="60.3" lengthAdjust="spacingAndGlyphs">Aulnay-sous-</text>
<text x="528.5" y="250.6" font-size="11" textLength="19.9" lengthAdjust="spacingAndGlyphs">Bois</text>
<text x="139.8" y="363.7" font-size="11" textLength="50.9" lengthAdjust="spacingAndGlyphs">Les Clayes-</text>
<text x="144" y="375.7" font-size="11" textLength="43.4" lengthAdjust="spacingAndGlyphs">sous-Bois</text>
<text x="201.1" y="386.8" font-size="11" textLength="45.9" lengthAdjust="spacingAndGlyphs">Saint-Cyr-</text>
<text x="209.8" y="399" font-size="11" textLength="28.5" lengthAdjust="spacingAndGlyphs">l'École</text>
<text x="281.5" y="260" font-size="11" textLength="42.7" lengthAdjust="spacingAndGlyphs">Carrières-</text>
<text x="283.3" y="273.6" font-size="11" textLength="42.2" lengthAdjust="spacingAndGlyphs">sur-Seine</text>
<text x="249" y="288.5" font-size="11" textLength="47.4" lengthAdjust="spacingAndGlyphs">Le Vésinet</text>
<text x="304.9" y="290.5" font-size="11" textLength="41.2" lengthAdjust="spacingAndGlyphs">Nanterre</text>
<text x="266.6" y="306.7" font-size="11" textLength="77.9" lengthAdjust="spacingAndGlyphs">Rueil-Malmaison</text>
<text x="355.5" y="279.8" font-size="11" textLength="82.2" lengthAdjust="spacingAndGlyphs">Clichy-la-Garenne</text>
<text x="285.7" y="354.8" font-size="14.5" textLength="128.3" lengthAdjust="spacingAndGlyphs">Boulogne-Billancourt</text>
<text x="380.8" y="371.9" font-size="11" textLength="47.7" lengthAdjust="spacingAndGlyphs">Montrouge</text>
<text x="293.7" y="383.6" font-size="11" textLength="36" lengthAdjust="spacingAndGlyphs">Chaville</text>
<text x="414.3" y="331.9" font-size="15.5" textLength="32.5" lengthAdjust="spacingAndGlyphs">Paris</text>
<text x="509.9" y="266.9" font-size="11" textLength="62.8" lengthAdjust="spacingAndGlyphs">Les Pavillons-</text>
<text x="519.3" y="279.3" font-size="11" textLength="44.7" lengthAdjust="spacingAndGlyphs">sous-Bois</text>
<text x="439.4" y="294.7" font-size="11" textLength="58.8" lengthAdjust="spacingAndGlyphs">Le Pré-Saint-</text>
<text x="451.1" y="307.1" font-size="11" textLength="35.2" lengthAdjust="spacingAndGlyphs">Gervais</text>
<text x="514.9" y="302.4" font-size="11" textLength="58.6" lengthAdjust="spacingAndGlyphs">Villemomble</text>
<text x="587.6" y="306.7" font-size="11" textLength="34" lengthAdjust="spacingAndGlyphs">Chelles</text>
<text x="466.2" y="324.5" font-size="14.5" textLength="58.8" lengthAdjust="spacingAndGlyphs">Montreuil</text>
<text x="583.9" y="328.5" font-size="11" textLength="57.1" lengthAdjust="spacingAndGlyphs">Champs-sur-</text>
<text x="598.3" y="341.4" font-size="11" textLength="30.3" lengthAdjust="spacingAndGlyphs">Marne</text>
<text x="517.3" y="341.9" font-size="11" textLength="52.1" lengthAdjust="spacingAndGlyphs">Le Perreux-</text>
<text x="519.8" y="354.3" font-size="11" textLength="48.7" lengthAdjust="spacingAndGlyphs">sur-Marne</text>
<text x="451.1" y="364.5" font-size="11" textLength="52.9" lengthAdjust="spacingAndGlyphs">Charenton-</text>
<text x="460.2" y="376.9" font-size="11" textLength="33.8" lengthAdjust="spacingAndGlyphs">le-Pont</text>
<text x="527.3" y="390.6" font-size="11" textLength="67" lengthAdjust="spacingAndGlyphs">Chennevières-</text>
<text x="115.5" y="428.5" font-size="11" textLength="44.7" lengthAdjust="spacingAndGlyphs">Élancourt</text>
<text x="178" y="419.8" font-size="11" textLength="47.4" lengthAdjust="spacingAndGlyphs">Montigny-</text>
<text x="169.1" y="432.2" font-size="11" textLength="66.3" lengthAdjust="spacingAndGlyphs">le-Bretonneux</text>
<text x="89.4" y="494.7" font-size="14.5" textLength="80.7" lengthAdjust="spacingAndGlyphs" fill="#1e8c1e" stroke="#1e8c1e" font-style="italic">Parc naturel</text>
<text x="101.8" y="512.1" font-size="14.5" textLength="55.1" lengthAdjust="spacingAndGlyphs" fill="#1e8c1e" stroke="#1e8c1e" font-style="italic">régional</text>
<text x="93.1" y="530.7" font-size="14.5" textLength="74.5" lengthAdjust="spacingAndGlyphs" fill="#1e8c1e" stroke="#1e8c1e" font-style="italic">de la Haute</text>
<text x="374.6" y="398.7" font-size="11" textLength="40.5" lengthAdjust="spacingAndGlyphs">Bagneux</text>
<text x="353.3" y="423.5" font-size="11" textLength="46.7" lengthAdjust="spacingAndGlyphs">Châtenay-</text>
<text x="357.7" y="435.9" font-size="11" textLength="37.2" lengthAdjust="spacingAndGlyphs">Malabry</text>
<text x="328.7" y="457" font-size="11" textLength="20.4" lengthAdjust="spacingAndGlyphs">Igny</text>
<text x="361.5" y="470.2" font-size="11" textLength="29" lengthAdjust="spacingAndGlyphs">Massy</text>
<text x="212" y="471.2" font-size="11" textLength="49.4" lengthAdjust="spacingAndGlyphs">Magny-les-</text>
<text x="215.5" y="483.1" font-size="11" textLength="42.9" lengthAdjust="spacingAndGlyphs">Hameaux</text>
<text x="310.6" y="497.2" font-size="11" textLength="59.6" lengthAdjust="spacingAndGlyphs">Villebon-sur-</text>
<text x="325.5" y="509.7" font-size="11" textLength="29" lengthAdjust="spacingAndGlyphs">Yvette</text>
<text x="385" y="526.5" font-size="11" textLength="54.6" lengthAdjust="spacingAndGlyphs">Épinay-sur-</text>
<text x="426.2" y="406.1" font-size="11" textLength="67" lengthAdjust="spacingAndGlyphs">Vitry-sur-Seine</text>
<text x="536.7" y="403.2" font-size="11" textLength="47.7" lengthAdjust="spacingAndGlyphs">sur-Marne</text>
<text x="449.8" y="427.7" font-size="11" textLength="45.4" lengthAdjust="spacingAndGlyphs">Choisy-le-</text>
<text x="464.7" y="439.7" font-size="11" textLength="15.4" lengthAdjust="spacingAndGlyphs">Roi</text>
<text x="524.8" y="424.8" font-size="11" textLength="59.1" lengthAdjust="spacingAndGlyphs">Sucy-en-Brie</text>
<text x="518.1" y="444.1" font-size="11" textLength="58.8" lengthAdjust="spacingAndGlyphs">Boissy-Saint-</text>
<text x="534.2" y="456.5" font-size="11" textLength="26.8" lengthAdjust="spacingAndGlyphs">Léger</text>
<text x="445.4" y="457.8" font-size="11" textLength="51.6" lengthAdjust="spacingAndGlyphs">Villeneuve-</text>
<text x="456" y="470.2" font-size="11" textLength="28.5" lengthAdjust="spacingAndGlyphs">le-Roi</text>
<text x="514.9" y="484.3" font-size="11" textLength="29.8" lengthAdjust="spacingAndGlyphs">Yerres</text>
<text x="448.6" y="496.7" font-size="11" textLength="58.3" lengthAdjust="spacingAndGlyphs">Vigneux-sur-</text>
<text x="465.2" y="509.7" font-size="11" textLength="25.6" lengthAdjust="spacingAndGlyphs">Seine</text>
<text x="520.6" y="510.4" font-size="11" textLength="56.3" lengthAdjust="spacingAndGlyphs">Épinay-sous-</text>
<text x="595.3" y="507.2" font-size="11" textLength="53.1" lengthAdjust="spacingAndGlyphs">Brie-Comte-</text>
<text x="627.3" y="397.9" font-size="11" textLength="70.7" lengthAdjust="spacingAndGlyphs">Roissy-en-Brie</text>
<text x="625.6" y="434.7" font-size="11" textLength="40.2" lengthAdjust="spacingAndGlyphs">Ozoir-la-</text>
</g>
<path fill="#8461c4" transform="translate(590,160) scale(0.55)" d="M0-11c1 0 1.6 1.5 1.6 3.5V-3L11 3v2.4L1.6 2.6V8l3 2.2V12L0 10.8-4.6 12v-1.8l3-2.2V2.6L-11 5.400V3l9.400-6v-4.500C-1.600-9.500-1-11 0-11z"/>
<path fill="#8461c4" transform="translate(161,343.300) scale(0.55)" d="M0-11c1 0 1.6 1.5 1.6 3.5V-3L11 3v2.4L1.6 2.6V8l3 2.2V12L0 10.8-4.6 12v-1.8l3-2.2V2.6L-11 5.400V3l9.400-6v-4.500C-1.600-9.500-1-11 0-11z"/>
<path fill="#8461c4" transform="translate(252.200,443.600) scale(0.55)" d="M0-11c1 0 1.6 1.5 1.6 3.5V-3L11 3v2.4L1.6 2.6V8l3 2.2V12L0 10.8-4.6 12v-1.8l3-2.2V2.6L-11 5.400V3l9.400-6v-4.500C-1.600-9.500-1-11 0-11z"/>
<g stroke-width="3.400" fill-opacity="0.62"><circle cx="139" cy="182" r="9.500" stroke="#0000ff" fill="#0000ff"/><circle cx="370.900" cy="181.800" r="9.500" stroke="#0000ff" fill="#0000ff"/><circle cx="502" cy="201" r="9.500" stroke="#0000ff" fill="#0000ff"/><circle cx="319.700" cy="422.800" r="9.500" stroke="#0000ff" fill="#0000ff"/><circle cx="466" cy="467" r="9.500" stroke="#0000ff" fill="#0000ff"/><circle cx="392.900" cy="278.900" r="9.500" stroke="#ff0000" fill="#ff0000" fill-opacity="0.88"/></g>
</svg>
<div id="zc"><div class="zb" style="border-bottom:1px solid #ccc"><span>+</span></div><div class="zb"><span>&#8722;</span></div></div>
<div id="attr"><span class="lk">Leaflet</span> <span class="bar">|</span> &copy; <span class="lk">OpenStreetMap</span> contributors</div>
</div>
</body>
</html>
